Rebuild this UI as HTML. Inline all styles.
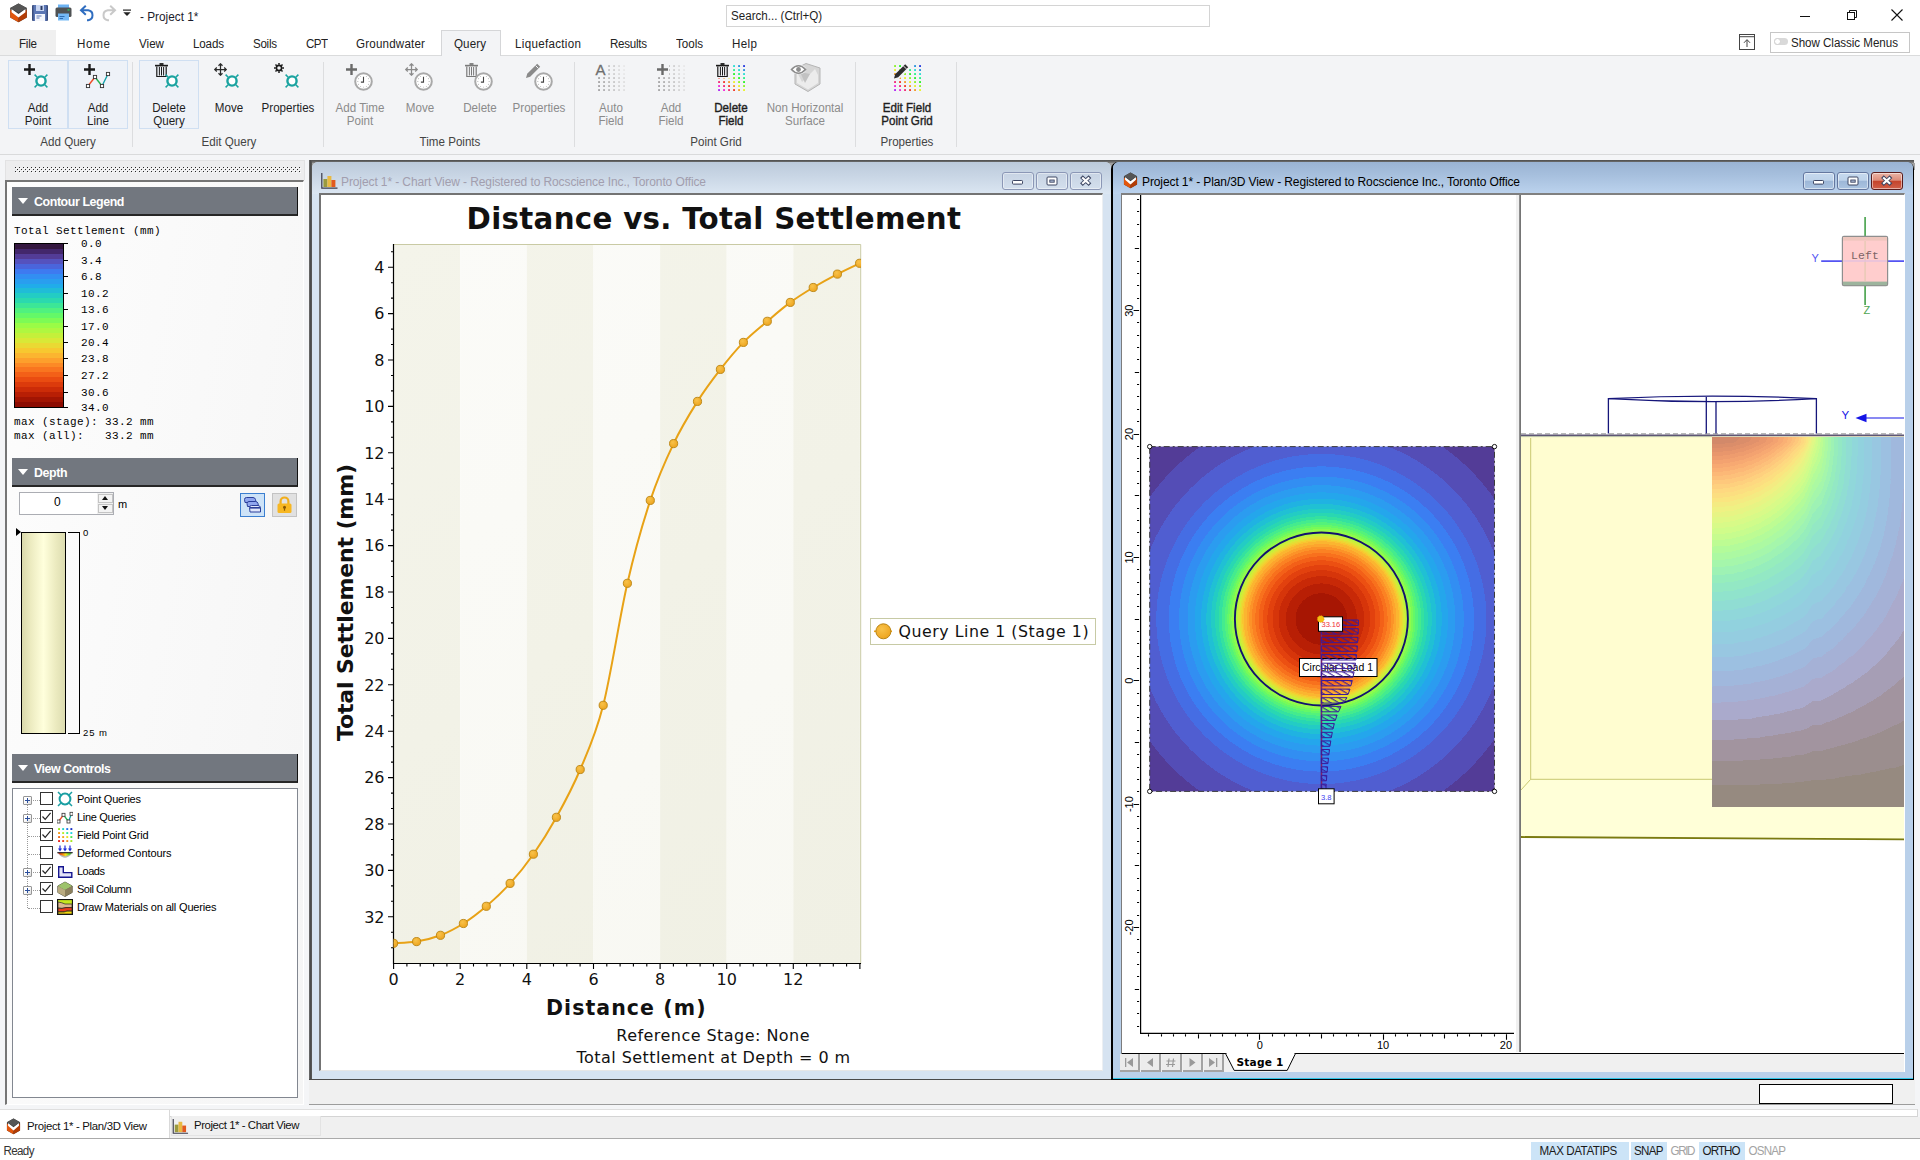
<!DOCTYPE html>
<html lang="en">
<head>
<meta charset="utf-8">
<title>Project 1* - Settle3</title>
<style>
*{box-sizing:border-box;margin:0;padding:0}
html,body{width:1920px;height:1160px;overflow:hidden;background:#f4f5f7}
body{font-family:"Liberation Sans",sans-serif;font-size:12px;color:#1e1e1e;position:relative}
.abs{position:absolute}
.t{position:absolute;white-space:nowrap;line-height:14px}
#titlebar{position:absolute;left:0;top:0;width:1920px;height:30px;background:#fff}
#tabrow{position:absolute;left:0;top:30px;width:1920px;height:26px;background:#fff;border-bottom:1px solid #dadbdc}
#filetab{position:absolute;left:0;top:0;width:56px;height:25px;background:#f0f0f0}
#ribbon{position:absolute;left:0;top:56px;width:1920px;height:99px;background:#f3f4f6;border-bottom:1px solid #d9dadb}
.tab{position:absolute;top:7px;font-size:11.6px;line-height:14px;white-space:nowrap;color:#222;transform:scaleY(1.09);transform-origin:50% 78%}
.sy{transform:scaleY(1.09);transform-origin:50% 78%}
#qtab{position:absolute;left:441px;top:0;width:60px;height:26px;background:#f3f4f6;border:1px solid #d5d6d8;border-bottom:none}
.rb{position:absolute;top:4px;height:69px;text-align:center;font-size:11.6px;line-height:13px;color:#1e1e1e}
.rb.hl{background:#eef2f8;box-shadow:inset 0 0 0 1px #cfdff2}
.rb.dis{color:#8b8b8b}
.rb .lbl{position:absolute;left:-20px;right:-20px;top:40.5px;white-space:pre-line;line-height:11.9px;transform:scaleY(1.09);transform-origin:50% 0}
.rb svg{position:absolute;left:50%;margin-left:-16px;top:2px}
.grp{position:absolute;top:79px;font-size:11.6px;line-height:14px;color:#444;white-space:nowrap;transform:scaleY(1.09);transform-origin:50% 78%}
.sep{position:absolute;top:6px;width:1px;height:85px;background:#dcdddf}
</style>
</head>
<body>
<div id="titlebar">
<svg class="abs" style="left:9px;top:3px" width="19" height="20" viewBox="0 0 19 20">
<polygon points="9.5,0.6 17.8,5 17.8,14.6 9.5,19.2 1.2,14.6 1.2,5" fill="#3e3e3e"/>
<polygon points="1.2,6.5 9.5,12.5 9.5,19.2 1.2,14.6" fill="#e2560d"/>
<polygon points="17.8,6.5 9.5,12.5 9.5,19.2 17.8,14.6" fill="#b23c05"/>
<polygon points="2.6,6 9.5,11 16.4,6 16.4,9.2 9.5,14.6 2.6,9.2" fill="#fff"/>
<polygon points="9.5,0.6 17.8,5 9.5,9.6 1.2,5" fill="#555"/>
</svg>
<svg class="abs" style="left:32px;top:5px" width="16" height="16" viewBox="0 0 16 16">
<rect x="0" y="0" width="16" height="16" rx="1" fill="#3b4d7c"/>
<rect x="1.5" y="0" width="13" height="16" fill="#5b76b4"/>
<rect x="4" y="0" width="8" height="6" fill="#c9d6f2"/>
<rect x="8.5" y="1" width="2" height="4" fill="#2b3a63"/>
<rect x="3" y="9" width="10" height="7" fill="#f4f6fc"/>
<rect x="4.5" y="10.5" width="5" height="1" fill="#5b76b4"/>
<rect x="4.5" y="12.5" width="3" height="1" fill="#5b76b4"/>
</svg>
<svg class="abs" style="left:55px;top:4px" width="17" height="17" viewBox="0 0 17 17">
<rect x="3" y="0.5" width="11" height="4" fill="#6cb2f2"/>
<rect x="0.5" y="3.5" width="16" height="9.5" rx="1.5" fill="#4f5254"/>
<rect x="12.5" y="5.2" width="2" height="1.4" fill="#2fc06a"/>
<rect x="3" y="9.5" width="11" height="7" fill="#74b9f6"/>
<rect x="4.5" y="12" width="5" height="1" fill="#2f6eb3"/>
<rect x="4.5" y="14" width="3.5" height="1" fill="#2f6eb3"/>
</svg>
<svg class="abs" style="left:79px;top:4px" width="17" height="18" viewBox="0 0 17 18">
<path d="M6.8,1.8 L2,6.3 L6.8,10.8 M2.4,6.3 H9.2 A5,5 0 0 1 9.2,16.2 H8" fill="none" stroke="#2f6dc0" stroke-width="2"/>
</svg>
<svg class="abs" style="left:100px;top:4px" width="17" height="18" viewBox="0 0 17 18">
<path d="M10.2,1.8 L15,6.3 L10.2,10.8 M14.6,6.3 H7.8 A5,5 0 0 0 7.8,16.2 H9" fill="none" stroke="#c9c9c9" stroke-width="2"/>
</svg>
<svg class="abs" style="left:122px;top:9px" width="10" height="8" viewBox="0 0 10 8">
<rect x="1" y="0.5" width="8" height="1.2" fill="#222"/><polygon points="1.3,3.2 8.7,3.2 5,7" fill="#222"/></svg>
<div class="t sy" id="ttl" style="left:140px;top:10px;font-size:11.8px;color:#1b1b2b">- Project 1*</div>
<div class="abs" style="left:726px;top:5px;width:484px;height:22px;border:1px solid #d4d4d4;background:#fff"></div>
<div class="t sy" id="srch" style="left:731px;top:9px;font-size:11.6px;color:#1e1e1e">Search... (Ctrl+Q)</div>
<svg class="abs" style="left:1795px;top:5px" width="115" height="22" viewBox="0 0 115 22">
<rect x="5" y="11" width="10" height="1" fill="#111"/>
<rect x="52.5" y="7.5" width="7" height="7" fill="none" stroke="#111" stroke-width="1"/>
<path d="M54.5,7.5 V5.5 H61.5 V12.5 H59.5" fill="none" stroke="#111" stroke-width="1"/>
<path d="M96.5,4.5 L107.5,15.5 M107.5,4.5 L96.5,15.5" fill="none" stroke="#111" stroke-width="1.1"/>
</svg>
</div>
<div id="tabrow"><div id="filetab"></div><div id="qtab"></div>
<div class="tab" style="left:19px;letter-spacing:-0.231px">File</div>
<div class="tab" style="left:77px;letter-spacing:0.686px">Home</div>
<div class="tab" style="left:139px;letter-spacing:0.022px">View</div>
<div class="tab" style="left:193px;letter-spacing:-0.151px">Loads</div>
<div class="tab" style="left:253px;letter-spacing:-0.286px">Soils</div>
<div class="tab" style="left:306px;letter-spacing:-0.6px">CPT</div>
<div class="tab" style="left:356px;letter-spacing:0.194px">Groundwater</div>
<div class="tab" style="left:454px;letter-spacing:0.103px">Query</div>
<div class="tab" style="left:515px;letter-spacing:0.313px">Liquefaction</div>
<div class="tab" style="left:610px;letter-spacing:-0.28px">Results</div>
<div class="tab" style="left:676px;letter-spacing:-0.02px">Tools</div>
<div class="tab" style="left:732px;letter-spacing:0.381px">Help</div>
<svg class="abs" style="left:1739px;top:3px" width="17" height="18" viewBox="0 0 17 18">
<rect x="0.5" y="1.5" width="15" height="15" fill="#fff" stroke="#444" stroke-width="1"/>
<rect x="0.5" y="1.5" width="15" height="2.2" fill="none" stroke="#444" stroke-width="1"/>
<path d="M8,14 V7 M5,9.8 L8,6.6 L11,9.8" fill="none" stroke="#444" stroke-width="1"/>
</svg>
<div class="abs" style="left:1770px;top:2px;width:140px;height:21px;border:1px solid #c6c6c6;background:#fff"></div>
<div class="abs" style="left:1774px;top:8px;width:14px;height:7px;border-radius:4px;background:#d9d9d9"></div><div class="abs" style="left:1774px;top:8px;width:7px;height:7px;border-radius:4px;background:#fff;border:1px solid #d0d0d0"></div>
<div class="t sy" style="left:1791px;top:6px;font-size:11.6px;color:#222;letter-spacing:-0.039px">Show Classic Menus</div>
</div>
<div id="ribbon">
<div class="rb hl" style="left:8.0px;width:60px"><svg width="40" height="34" viewBox="0 0 40 34" style="margin-left:-20px;top:0"><path d="M11.5,4 V15 M6,9.5 H17" stroke="#1a1a1a" stroke-width="2.4" fill="none"/><g transform="translate(16,14)" stroke="#1aa3a0" fill="none"><path d="M0.6,0.6 L3.2,3.2 M13.4,0.6 L10.8,3.2 M0.6,13.4 L3.2,10.8 M13.4,13.4 L10.8,10.8" stroke-width="1.5"/><circle cx="7" cy="7" r="4.6" stroke-width="2.4" fill="#fff"/></g></svg><div class="lbl">Add
Point</div></div>
<div class="rb hl" style="left:68.0px;width:60px"><svg width="40" height="34" viewBox="0 0 40 34" style="margin-left:-20px;top:0"><path d="M11.5,4 V15 M6,9.5 H17" stroke="#1a1a1a" stroke-width="2.4" fill="none"/><g fill="none" stroke-width="1.4"><path d="M10,26 L17,17" stroke="#f04a23"/><path d="M17,17 L24,26" stroke="#23b14d"/><path d="M24,26 L30,14" stroke="#12a0a8"/></g><rect x="8.4" y="24.4" width="3.2" height="3.2" fill="#fff" stroke="#333" stroke-width="0.9"/><rect x="15.4" y="15.4" width="3.2" height="3.2" fill="#fff" stroke="#333" stroke-width="0.9"/><rect x="22.4" y="24.4" width="3.2" height="3.2" fill="#fff" stroke="#333" stroke-width="0.9"/><rect x="28.4" y="12.4" width="3.2" height="3.2" fill="#fff" stroke="#333" stroke-width="0.9"/></svg><div class="lbl">Add
Line</div></div>
<div class="sep" style="left:132px"></div>
<div class="rb hl" style="left:139.0px;width:60px"><svg width="40" height="34" viewBox="0 0 40 34" style="margin-left:-20px;top:0"><g transform="translate(6,3)" fill="none" stroke="#1a1a1a"><path d="M0,2.6 H13" stroke-width="1.6"/><path d="M4.5,1 H8.5" stroke-width="1.8"/><path d="M1.8,3.4 V13.5 H11.2 V3.4" stroke-width="1.2"/><path d="M4.4,4 V12.5 M6.5,4 V12.5 M8.6,4 V12.5" stroke-width="1"/></g><g transform="translate(16,14)" stroke="#1aa3a0" fill="none"><path d="M0.6,0.6 L3.2,3.2 M13.4,0.6 L10.8,3.2 M0.6,13.4 L3.2,10.8 M13.4,13.4 L10.8,10.8" stroke-width="1.5"/><circle cx="7" cy="7" r="4.6" stroke-width="2.4" fill="#fff"/></g></svg><div class="lbl">Delete
Query</div></div>
<div class="rb " style="left:199.0px;width:60px"><svg width="40" height="34" viewBox="0 0 40 34" style="margin-left:-20px;top:0"><g transform="translate(5,3)" fill="none" stroke="#2a2a2a" stroke-width="1.25"><path d="M6.5,0.8 V12.2 M0.8,6.5 H12.2"/><path d="M4.5,2.8 L6.5,0.8 L8.5,2.8 M4.5,10.2 L6.5,12.2 L8.5,10.2 M2.8,4.5 L0.8,6.5 L2.8,8.5 M10.2,4.5 L12.2,6.5 L10.2,8.5"/></g><g transform="translate(16,14)" stroke="#1aa3a0" fill="none"><path d="M0.6,0.6 L3.2,3.2 M13.4,0.6 L10.8,3.2 M0.6,13.4 L3.2,10.8 M13.4,13.4 L10.8,10.8" stroke-width="1.5"/><circle cx="7" cy="7" r="4.6" stroke-width="2.4" fill="#fff"/></g></svg><div class="lbl">Move</div></div>
<div class="rb " style="left:258.0px;width:60px"><svg width="40" height="34" viewBox="0 0 40 34" style="margin-left:-20px;top:0"><g transform="translate(11,8)" stroke="#1a1a1a" fill="none"><circle r="2.6" stroke-width="1.6"/><path d="M3.20,0.00 L5.00,0.00" stroke-width="1.5"/><path d="M2.26,2.26 L3.54,3.54" stroke-width="1.5"/><path d="M0.00,3.20 L0.00,5.00" stroke-width="1.5"/><path d="M-2.26,2.26 L-3.54,3.54" stroke-width="1.5"/><path d="M-3.20,0.00 L-5.00,0.00" stroke-width="1.5"/><path d="M-2.26,-2.26 L-3.54,-3.54" stroke-width="1.5"/><path d="M-0.00,-3.20 L-0.00,-5.00" stroke-width="1.5"/><path d="M2.26,-2.26 L3.54,-3.54" stroke-width="1.5"/></g><g transform="translate(17,14)" stroke="#1aa3a0" fill="none"><path d="M0.6,0.6 L3.2,3.2 M13.4,0.6 L10.8,3.2 M0.6,13.4 L3.2,10.8 M13.4,13.4 L10.8,10.8" stroke-width="1.5"/><circle cx="7" cy="7" r="4.6" stroke-width="2.4" fill="#fff"/></g></svg><div class="lbl">Properties</div></div>
<div class="sep" style="left:323px"></div>
<div class="rb dis" style="left:330.0px;width:60px"><svg width="40" height="34" viewBox="0 0 40 34" style="margin-left:-20px;top:0"><path d="M11.5,4 V15 M6,9.5 H17" stroke="#6a6a6a" stroke-width="2.4" fill="none"/><g transform="translate(23.5,21.5)"><circle r="8.3" fill="#fff" stroke="#a9a9a9" stroke-width="2"/><path d="M0,-4.8 V0.6 H-2.6" stroke="#444" stroke-width="1.1" fill="none"/><circle cx="2.80" cy="-4.85" r="0.45" fill="#777"/><circle cx="4.85" cy="-2.80" r="0.45" fill="#777"/><circle cx="5.60" cy="-0.00" r="0.45" fill="#777"/><circle cx="4.85" cy="2.80" r="0.45" fill="#777"/><circle cx="2.80" cy="4.85" r="0.45" fill="#777"/><circle cx="0.00" cy="5.60" r="0.45" fill="#777"/><circle cx="-2.80" cy="4.85" r="0.45" fill="#777"/><circle cx="-4.85" cy="2.80" r="0.45" fill="#777"/><circle cx="-5.60" cy="0.00" r="0.45" fill="#777"/><circle cx="-4.85" cy="-2.80" r="0.45" fill="#777"/><circle cx="-2.80" cy="-4.85" r="0.45" fill="#777"/></g></svg><div class="lbl">Add Time
Point</div></div>
<div class="rb dis" style="left:390.0px;width:60px"><svg width="40" height="34" viewBox="0 0 40 34" style="margin-left:-20px;top:0"><g transform="translate(5,3)" fill="none" stroke="#8a8a8a" stroke-width="1.25"><path d="M6.5,0.8 V12.2 M0.8,6.5 H12.2"/><path d="M4.5,2.8 L6.5,0.8 L8.5,2.8 M4.5,10.2 L6.5,12.2 L8.5,10.2 M2.8,4.5 L0.8,6.5 L2.8,8.5 M10.2,4.5 L12.2,6.5 L10.2,8.5"/></g><g transform="translate(23.5,21.5)"><circle r="8.3" fill="#fff" stroke="#a9a9a9" stroke-width="2"/><path d="M0,-4.8 V0.6 H-2.6" stroke="#444" stroke-width="1.1" fill="none"/><circle cx="2.80" cy="-4.85" r="0.45" fill="#777"/><circle cx="4.85" cy="-2.80" r="0.45" fill="#777"/><circle cx="5.60" cy="-0.00" r="0.45" fill="#777"/><circle cx="4.85" cy="2.80" r="0.45" fill="#777"/><circle cx="2.80" cy="4.85" r="0.45" fill="#777"/><circle cx="0.00" cy="5.60" r="0.45" fill="#777"/><circle cx="-2.80" cy="4.85" r="0.45" fill="#777"/><circle cx="-4.85" cy="2.80" r="0.45" fill="#777"/><circle cx="-5.60" cy="0.00" r="0.45" fill="#777"/><circle cx="-4.85" cy="-2.80" r="0.45" fill="#777"/><circle cx="-2.80" cy="-4.85" r="0.45" fill="#777"/></g></svg><div class="lbl">Move</div></div>
<div class="rb dis" style="left:450.0px;width:60px"><svg width="40" height="34" viewBox="0 0 40 34" style="margin-left:-20px;top:0"><g transform="translate(5,3)" fill="none" stroke="#7a7a7a"><path d="M0,2.6 H13" stroke-width="1.6"/><path d="M4.5,1 H8.5" stroke-width="1.8"/><path d="M1.8,3.4 V13.5 H11.2 V3.4" stroke-width="1.2"/><path d="M4.4,4 V12.5 M6.5,4 V12.5 M8.6,4 V12.5" stroke-width="1"/></g><g transform="translate(23.5,21.5)"><circle r="8.3" fill="#fff" stroke="#a9a9a9" stroke-width="2"/><path d="M0,-4.8 V0.6 H-2.6" stroke="#444" stroke-width="1.1" fill="none"/><circle cx="2.80" cy="-4.85" r="0.45" fill="#777"/><circle cx="4.85" cy="-2.80" r="0.45" fill="#777"/><circle cx="5.60" cy="-0.00" r="0.45" fill="#777"/><circle cx="4.85" cy="2.80" r="0.45" fill="#777"/><circle cx="2.80" cy="4.85" r="0.45" fill="#777"/><circle cx="0.00" cy="5.60" r="0.45" fill="#777"/><circle cx="-2.80" cy="4.85" r="0.45" fill="#777"/><circle cx="-4.85" cy="2.80" r="0.45" fill="#777"/><circle cx="-5.60" cy="0.00" r="0.45" fill="#777"/><circle cx="-4.85" cy="-2.80" r="0.45" fill="#777"/><circle cx="-2.80" cy="-4.85" r="0.45" fill="#777"/></g></svg><div class="lbl">Delete</div></div>
<div class="rb dis" style="left:509.0px;width:60px"><svg width="40" height="34" viewBox="0 0 40 34" style="margin-left:-20px;top:0"><g transform="translate(6,3)"><path d="M1,15 L2.2,10.8 L12.2,0.8 L15.2,3.8 L5.2,13.8 Z" fill="#8a8a8a"/><path d="M10.6,2.6 L13.4,5.4" stroke="#f3f4f6" stroke-width="1"/></g><g transform="translate(24.5,21.5)"><circle r="8.3" fill="#fff" stroke="#a9a9a9" stroke-width="2"/><path d="M0,-4.8 V0.6 H-2.6" stroke="#444" stroke-width="1.1" fill="none"/><circle cx="2.80" cy="-4.85" r="0.45" fill="#777"/><circle cx="4.85" cy="-2.80" r="0.45" fill="#777"/><circle cx="5.60" cy="-0.00" r="0.45" fill="#777"/><circle cx="4.85" cy="2.80" r="0.45" fill="#777"/><circle cx="2.80" cy="4.85" r="0.45" fill="#777"/><circle cx="0.00" cy="5.60" r="0.45" fill="#777"/><circle cx="-2.80" cy="4.85" r="0.45" fill="#777"/><circle cx="-4.85" cy="2.80" r="0.45" fill="#777"/><circle cx="-5.60" cy="0.00" r="0.45" fill="#777"/><circle cx="-4.85" cy="-2.80" r="0.45" fill="#777"/><circle cx="-2.80" cy="-4.85" r="0.45" fill="#777"/></g></svg><div class="lbl">Properties</div></div>
<div class="sep" style="left:574px"></div>
<div class="rb dis" style="left:581.0px;width:60px"><svg width="40" height="34" viewBox="0 0 40 34" style="margin-left:-20px;top:0"><rect x="7.2" y="5.2" width="1.7" height="1.7" fill="#a0a0a0"/><rect x="12.2" y="5.2" width="1.7" height="1.7" fill="#aeaeae"/><rect x="17.2" y="5.2" width="1.7" height="1.7" fill="#bcbcbc"/><rect x="22.2" y="5.2" width="1.7" height="1.7" fill="#cacaca"/><rect x="27.2" y="5.2" width="1.7" height="1.7" fill="#d8d8d8"/><rect x="32.2" y="5.2" width="1.7" height="1.7" fill="#e6e6e6"/><rect x="7.2" y="9.2" width="1.7" height="1.7" fill="#a0a0a0"/><rect x="12.2" y="9.2" width="1.7" height="1.7" fill="#aeaeae"/><rect x="17.2" y="9.2" width="1.7" height="1.7" fill="#bcbcbc"/><rect x="22.2" y="9.2" width="1.7" height="1.7" fill="#cacaca"/><rect x="27.2" y="9.2" width="1.7" height="1.7" fill="#d8d8d8"/><rect x="32.2" y="9.2" width="1.7" height="1.7" fill="#e6e6e6"/><rect x="7.2" y="13.2" width="1.7" height="1.7" fill="#a0a0a0"/><rect x="12.2" y="13.2" width="1.7" height="1.7" fill="#aeaeae"/><rect x="17.2" y="13.2" width="1.7" height="1.7" fill="#bcbcbc"/><rect x="22.2" y="13.2" width="1.7" height="1.7" fill="#cacaca"/><rect x="27.2" y="13.2" width="1.7" height="1.7" fill="#d8d8d8"/><rect x="32.2" y="13.2" width="1.7" height="1.7" fill="#e6e6e6"/><rect x="7.2" y="17.2" width="1.7" height="1.7" fill="#969696"/><rect x="12.2" y="17.2" width="1.7" height="1.7" fill="#a4a4a4"/><rect x="17.2" y="17.2" width="1.7" height="1.7" fill="#b2b2b2"/><rect x="22.2" y="17.2" width="1.7" height="1.7" fill="#c0c0c0"/><rect x="27.2" y="17.2" width="1.7" height="1.7" fill="#cecece"/><rect x="32.2" y="17.2" width="1.7" height="1.7" fill="#dcdcdc"/><rect x="7.2" y="21.2" width="1.7" height="1.7" fill="#969696"/><rect x="12.2" y="21.2" width="1.7" height="1.7" fill="#a4a4a4"/><rect x="17.2" y="21.2" width="1.7" height="1.7" fill="#b2b2b2"/><rect x="22.2" y="21.2" width="1.7" height="1.7" fill="#c0c0c0"/><rect x="27.2" y="21.2" width="1.7" height="1.7" fill="#cecece"/><rect x="32.2" y="21.2" width="1.7" height="1.7" fill="#dcdcdc"/><rect x="7.2" y="25.2" width="1.7" height="1.7" fill="#969696"/><rect x="12.2" y="25.2" width="1.7" height="1.7" fill="#a4a4a4"/><rect x="17.2" y="25.2" width="1.7" height="1.7" fill="#b2b2b2"/><rect x="22.2" y="25.2" width="1.7" height="1.7" fill="#c0c0c0"/><rect x="27.2" y="25.2" width="1.7" height="1.7" fill="#cecece"/><rect x="32.2" y="25.2" width="1.7" height="1.7" fill="#dcdcdc"/><rect x="7.2" y="29.2" width="1.7" height="1.7" fill="#969696"/><rect x="12.2" y="29.2" width="1.7" height="1.7" fill="#a4a4a4"/><rect x="17.2" y="29.2" width="1.7" height="1.7" fill="#b2b2b2"/><rect x="22.2" y="29.2" width="1.7" height="1.7" fill="#c0c0c0"/><rect x="27.2" y="29.2" width="1.7" height="1.7" fill="#cecece"/><rect x="32.2" y="29.2" width="1.7" height="1.7" fill="#dcdcdc"/><rect x="4" y="3" width="13" height="13" fill="#f3f4f6"/><text x="4.5" y="15" font-family="Liberation Sans,sans-serif" font-size="15" fill="#6e6e6e" stroke="#6e6e6e" stroke-width="0.3">A</text></svg><div class="lbl">Auto
Field</div></div>
<div class="rb dis" style="left:641.0px;width:60px"><svg width="40" height="34" viewBox="0 0 40 34" style="margin-left:-20px;top:0"><rect x="7.2" y="5.2" width="1.7" height="1.7" fill="#a0a0a0"/><rect x="12.2" y="5.2" width="1.7" height="1.7" fill="#aeaeae"/><rect x="17.2" y="5.2" width="1.7" height="1.7" fill="#bcbcbc"/><rect x="22.2" y="5.2" width="1.7" height="1.7" fill="#cacaca"/><rect x="27.2" y="5.2" width="1.7" height="1.7" fill="#d8d8d8"/><rect x="32.2" y="5.2" width="1.7" height="1.7" fill="#e6e6e6"/><rect x="7.2" y="9.2" width="1.7" height="1.7" fill="#a0a0a0"/><rect x="12.2" y="9.2" width="1.7" height="1.7" fill="#aeaeae"/><rect x="17.2" y="9.2" width="1.7" height="1.7" fill="#bcbcbc"/><rect x="22.2" y="9.2" width="1.7" height="1.7" fill="#cacaca"/><rect x="27.2" y="9.2" width="1.7" height="1.7" fill="#d8d8d8"/><rect x="32.2" y="9.2" width="1.7" height="1.7" fill="#e6e6e6"/><rect x="7.2" y="13.2" width="1.7" height="1.7" fill="#a0a0a0"/><rect x="12.2" y="13.2" width="1.7" height="1.7" fill="#aeaeae"/><rect x="17.2" y="13.2" width="1.7" height="1.7" fill="#bcbcbc"/><rect x="22.2" y="13.2" width="1.7" height="1.7" fill="#cacaca"/><rect x="27.2" y="13.2" width="1.7" height="1.7" fill="#d8d8d8"/><rect x="32.2" y="13.2" width="1.7" height="1.7" fill="#e6e6e6"/><rect x="7.2" y="17.2" width="1.7" height="1.7" fill="#969696"/><rect x="12.2" y="17.2" width="1.7" height="1.7" fill="#a4a4a4"/><rect x="17.2" y="17.2" width="1.7" height="1.7" fill="#b2b2b2"/><rect x="22.2" y="17.2" width="1.7" height="1.7" fill="#c0c0c0"/><rect x="27.2" y="17.2" width="1.7" height="1.7" fill="#cecece"/><rect x="32.2" y="17.2" width="1.7" height="1.7" fill="#dcdcdc"/><rect x="7.2" y="21.2" width="1.7" height="1.7" fill="#969696"/><rect x="12.2" y="21.2" width="1.7" height="1.7" fill="#a4a4a4"/><rect x="17.2" y="21.2" width="1.7" height="1.7" fill="#b2b2b2"/><rect x="22.2" y="21.2" width="1.7" height="1.7" fill="#c0c0c0"/><rect x="27.2" y="21.2" width="1.7" height="1.7" fill="#cecece"/><rect x="32.2" y="21.2" width="1.7" height="1.7" fill="#dcdcdc"/><rect x="7.2" y="25.2" width="1.7" height="1.7" fill="#969696"/><rect x="12.2" y="25.2" width="1.7" height="1.7" fill="#a4a4a4"/><rect x="17.2" y="25.2" width="1.7" height="1.7" fill="#b2b2b2"/><rect x="22.2" y="25.2" width="1.7" height="1.7" fill="#c0c0c0"/><rect x="27.2" y="25.2" width="1.7" height="1.7" fill="#cecece"/><rect x="32.2" y="25.2" width="1.7" height="1.7" fill="#dcdcdc"/><rect x="7.2" y="29.2" width="1.7" height="1.7" fill="#969696"/><rect x="12.2" y="29.2" width="1.7" height="1.7" fill="#a4a4a4"/><rect x="17.2" y="29.2" width="1.7" height="1.7" fill="#b2b2b2"/><rect x="22.2" y="29.2" width="1.7" height="1.7" fill="#c0c0c0"/><rect x="27.2" y="29.2" width="1.7" height="1.7" fill="#cecece"/><rect x="32.2" y="29.2" width="1.7" height="1.7" fill="#dcdcdc"/><rect x="5" y="3" width="13" height="13" fill="#f3f4f6"/><path d="M11.5,4 V15 M6,9.5 H17" stroke="#6a6a6a" stroke-width="2.4" fill="none"/></svg><div class="lbl">Add
Field</div></div>
<div class="rb " style="left:701.0px;width:60px"><svg width="40" height="34" viewBox="0 0 40 34" style="margin-left:-20px;top:0"><rect x="7.2" y="5.2" width="1.7" height="1.7" fill="#75f200"/><rect x="12.2" y="5.2" width="1.7" height="1.7" fill="#02f200"/><rect x="17.2" y="5.2" width="1.7" height="1.7" fill="#00f271"/><rect x="22.2" y="5.2" width="1.7" height="1.7" fill="#00d8cc"/><rect x="27.2" y="5.2" width="1.7" height="1.7" fill="#007ed8"/><rect x="32.2" y="5.2" width="1.7" height="1.7" fill="#0017d8"/><rect x="7.2" y="9.2" width="1.7" height="1.7" fill="#e8f200"/><rect x="12.2" y="9.2" width="1.7" height="1.7" fill="#75f200"/><rect x="17.2" y="9.2" width="1.7" height="1.7" fill="#02f200"/><rect x="22.2" y="9.2" width="1.7" height="1.7" fill="#00f271"/><rect x="27.2" y="9.2" width="1.7" height="1.7" fill="#00d8cc"/><rect x="32.2" y="9.2" width="1.7" height="1.7" fill="#007ed8"/><rect x="7.2" y="13.2" width="1.7" height="1.7" fill="#f28900"/><rect x="12.2" y="13.2" width="1.7" height="1.7" fill="#e8f200"/><rect x="17.2" y="13.2" width="1.7" height="1.7" fill="#75f200"/><rect x="22.2" y="13.2" width="1.7" height="1.7" fill="#02f200"/><rect x="27.2" y="13.2" width="1.7" height="1.7" fill="#00f271"/><rect x="32.2" y="13.2" width="1.7" height="1.7" fill="#00d8cc"/><rect x="7.2" y="17.2" width="1.7" height="1.7" fill="#f21600"/><rect x="12.2" y="17.2" width="1.7" height="1.7" fill="#f28900"/><rect x="17.2" y="17.2" width="1.7" height="1.7" fill="#e8f200"/><rect x="22.2" y="17.2" width="1.7" height="1.7" fill="#75f200"/><rect x="27.2" y="17.2" width="1.7" height="1.7" fill="#02f200"/><rect x="32.2" y="17.2" width="1.7" height="1.7" fill="#00f271"/><rect x="7.2" y="21.2" width="1.7" height="1.7" fill="#f2005c"/><rect x="12.2" y="21.2" width="1.7" height="1.7" fill="#f21600"/><rect x="17.2" y="21.2" width="1.7" height="1.7" fill="#f28900"/><rect x="22.2" y="21.2" width="1.7" height="1.7" fill="#e8f200"/><rect x="27.2" y="21.2" width="1.7" height="1.7" fill="#75f200"/><rect x="32.2" y="21.2" width="1.7" height="1.7" fill="#02f200"/><rect x="7.2" y="25.2" width="1.7" height="1.7" fill="#f200cf"/><rect x="12.2" y="25.2" width="1.7" height="1.7" fill="#f2005c"/><rect x="17.2" y="25.2" width="1.7" height="1.7" fill="#f21600"/><rect x="22.2" y="25.2" width="1.7" height="1.7" fill="#f28900"/><rect x="27.2" y="25.2" width="1.7" height="1.7" fill="#e8f200"/><rect x="32.2" y="25.2" width="1.7" height="1.7" fill="#75f200"/><rect x="7.2" y="29.2" width="1.7" height="1.7" fill="#a100f2"/><rect x="12.2" y="29.2" width="1.7" height="1.7" fill="#f200cf"/><rect x="17.2" y="29.2" width="1.7" height="1.7" fill="#f2005c"/><rect x="22.2" y="29.2" width="1.7" height="1.7" fill="#f21600"/><rect x="27.2" y="29.2" width="1.7" height="1.7" fill="#f28900"/><rect x="32.2" y="29.2" width="1.7" height="1.7" fill="#e8f200"/><rect x="4" y="3" width="15" height="15.5" fill="#f3f4f6"/><g transform="translate(5,3)" fill="none" stroke="#1a1a1a"><path d="M0,2.6 H13" stroke-width="1.6"/><path d="M4.5,1 H8.5" stroke-width="1.8"/><path d="M1.8,3.4 V13.5 H11.2 V3.4" stroke-width="1.2"/><path d="M4.4,4 V12.5 M6.5,4 V12.5 M8.6,4 V12.5" stroke-width="1"/></g></svg><div class="lbl" style="-webkit-text-stroke:0.35px #1e1e1e">Delete
Field</div></div>
<div class="rb dis" style="left:775.0px;width:60px"><svg width="40" height="34" viewBox="0 0 40 34" style="margin-left:-20px;top:0"><g transform="translate(6,3)"><polygon points="4,6 15,0.5 29,5 29,21 17,28.5 4,21" fill="#d6d6d6" stroke="#b5b5b5" stroke-width="1"/><path d="M6,9 L11,19 L17,13 L24,6 L27,12 L27,20 L17,26.5 L6,20 Z" fill="#ececec"/><path d="M9,9 L14,20 L19,11 Z" fill="#c2c2c2"/><ellipse cx="7.5" cy="6.5" rx="7.5" ry="4.8" fill="#f3f4f6"/><path d="M0.5,6.5 Q7.5,-1 14.5,6.5 Q7.5,14 0.5,6.5 Z" fill="#fff" stroke="#8c8c8c" stroke-width="1.6"/><circle cx="7.5" cy="6.5" r="2.4" fill="#8c8c8c"/></g></svg><div class="lbl">Non Horizontal
Surface</div></div>
<div class="sep" style="left:855px"></div>
<div class="rb " style="left:877.0px;width:60px"><svg width="40" height="34" viewBox="0 0 40 34" style="margin-left:-20px;top:0"><rect x="7.2" y="5.2" width="1.7" height="1.7" fill="#75f200"/><rect x="12.2" y="5.2" width="1.7" height="1.7" fill="#02f200"/><rect x="17.2" y="5.2" width="1.7" height="1.7" fill="#00f271"/><rect x="22.2" y="5.2" width="1.7" height="1.7" fill="#00d8cc"/><rect x="27.2" y="5.2" width="1.7" height="1.7" fill="#007ed8"/><rect x="32.2" y="5.2" width="1.7" height="1.7" fill="#0017d8"/><rect x="7.2" y="9.2" width="1.7" height="1.7" fill="#e8f200"/><rect x="12.2" y="9.2" width="1.7" height="1.7" fill="#75f200"/><rect x="17.2" y="9.2" width="1.7" height="1.7" fill="#02f200"/><rect x="22.2" y="9.2" width="1.7" height="1.7" fill="#00f271"/><rect x="27.2" y="9.2" width="1.7" height="1.7" fill="#00d8cc"/><rect x="32.2" y="9.2" width="1.7" height="1.7" fill="#007ed8"/><rect x="7.2" y="13.2" width="1.7" height="1.7" fill="#f28900"/><rect x="12.2" y="13.2" width="1.7" height="1.7" fill="#e8f200"/><rect x="17.2" y="13.2" width="1.7" height="1.7" fill="#75f200"/><rect x="22.2" y="13.2" width="1.7" height="1.7" fill="#02f200"/><rect x="27.2" y="13.2" width="1.7" height="1.7" fill="#00f271"/><rect x="32.2" y="13.2" width="1.7" height="1.7" fill="#00d8cc"/><rect x="7.2" y="17.2" width="1.7" height="1.7" fill="#f21600"/><rect x="12.2" y="17.2" width="1.7" height="1.7" fill="#f28900"/><rect x="17.2" y="17.2" width="1.7" height="1.7" fill="#e8f200"/><rect x="22.2" y="17.2" width="1.7" height="1.7" fill="#75f200"/><rect x="27.2" y="17.2" width="1.7" height="1.7" fill="#02f200"/><rect x="32.2" y="17.2" width="1.7" height="1.7" fill="#00f271"/><rect x="7.2" y="21.2" width="1.7" height="1.7" fill="#f2005c"/><rect x="12.2" y="21.2" width="1.7" height="1.7" fill="#f21600"/><rect x="17.2" y="21.2" width="1.7" height="1.7" fill="#f28900"/><rect x="22.2" y="21.2" width="1.7" height="1.7" fill="#e8f200"/><rect x="27.2" y="21.2" width="1.7" height="1.7" fill="#75f200"/><rect x="32.2" y="21.2" width="1.7" height="1.7" fill="#02f200"/><rect x="7.2" y="25.2" width="1.7" height="1.7" fill="#f200cf"/><rect x="12.2" y="25.2" width="1.7" height="1.7" fill="#f2005c"/><rect x="17.2" y="25.2" width="1.7" height="1.7" fill="#f21600"/><rect x="22.2" y="25.2" width="1.7" height="1.7" fill="#f28900"/><rect x="27.2" y="25.2" width="1.7" height="1.7" fill="#e8f200"/><rect x="32.2" y="25.2" width="1.7" height="1.7" fill="#75f200"/><rect x="7.2" y="29.2" width="1.7" height="1.7" fill="#a100f2"/><rect x="12.2" y="29.2" width="1.7" height="1.7" fill="#f200cf"/><rect x="17.2" y="29.2" width="1.7" height="1.7" fill="#f2005c"/><rect x="22.2" y="29.2" width="1.7" height="1.7" fill="#f21600"/><rect x="27.2" y="29.2" width="1.7" height="1.7" fill="#f28900"/><rect x="32.2" y="29.2" width="1.7" height="1.7" fill="#e8f200"/><polygon points="5,20 20,2 25,6 10,21" fill="#f3f4f6"/><g transform="translate(6,3.5)"><path d="M1,15 L2.2,10.8 L12.2,0.8 L15.2,3.8 L5.2,13.8 Z" fill="#2c2c2c"/><path d="M10.6,2.6 L13.4,5.4" stroke="#f3f4f6" stroke-width="1"/></g></svg><div class="lbl" style="-webkit-text-stroke:0.35px #1e1e1e">Edit Field
Point Grid</div></div>
<div class="sep" style="left:956px"></div>
<div class="grp" style="left:18px;width:100px;text-align:center">Add Query</div>
<div class="grp" style="left:179px;width:100px;text-align:center">Edit Query</div>
<div class="grp" style="left:400px;width:100px;text-align:center">Time Points</div>
<div class="grp" style="left:666px;width:100px;text-align:center">Point Grid</div>
<div class="grp" style="left:857px;width:100px;text-align:center">Properties</div>
</div>
<style>
#lp{position:absolute;left:5px;top:180px;width:299px;height:925px;background:linear-gradient(100deg,#fdfdfd,#f5f5f5);border-left:2px solid #757575;border-top:2px solid #757575;border-right:1px solid #fff;border-bottom:1px solid #fff}
#grip{position:absolute;left:5px;top:160px;width:300px;height:20px;background:#ededee;border:1px solid #e2e2e3;border-bottom:none}
.ph{position:absolute;left:12px;width:286px;height:29px;background:#72777f;border-bottom:2px solid #262626;border-right:1px solid #111;color:#fff;font-weight:bold;font-size:12.4px}
.ph span{position:absolute;left:22px;top:8px;line-height:14px;white-space:nowrap}
.ph i{position:absolute;left:6px;top:11px;width:0;height:0;border-left:5px solid transparent;border-right:5px solid transparent;border-top:6px solid #fff}
.mono{position:absolute;font-family:"Liberation Mono",monospace;font-size:11px;letter-spacing:0.4px;line-height:12px;color:#000;white-space:pre;}
.tr{position:absolute;left:77px;font-size:11px;line-height:14px;color:#000;white-space:nowrap}
.cb{position:absolute;left:40px;width:13px;height:13px;border:1px solid #333;background:#fff}
.ex{position:absolute;left:23px;width:9px;height:9px;border:1px solid #969696;background:linear-gradient(135deg,#fff 40%,#dcdcdc);border-radius:1px}
.ex:before{content:"";position:absolute;left:1px;top:3px;width:5px;height:1px;background:#2c4f9c}
.ex:after{content:"";position:absolute;left:3px;top:1px;width:1px;height:5px;background:#2c4f9c}
</style>
<div id="grip"></div><svg class="abs" style="left:15px;top:167px" width="286" height="6" viewBox="0 0 286 6"><defs><pattern id="gp" width="4" height="4" patternUnits="userSpaceOnUse"><rect x="0" y="0" width="1" height="1" fill="#2a2a2a"/><rect x="2" y="2" width="1" height="1" fill="#2a2a2a"/><rect x="1" y="1" width="1" height="1" fill="#fff"/><rect x="3" y="3" width="1" height="1" fill="#fff"/></pattern></defs><rect width="286" height="6" fill="url(#gp)"/></svg>
<div id="lp"></div>
<div class="ph" style="top:187px"><i></i><span style="letter-spacing:-0.403px">Contour Legend</span></div>
<div class="mono" style="left:14px;top:225px">Total Settlement (mm)</div>
<div class="abs" style="left:14px;top:243px;width:50px;height:165px;border:1px solid #000;background:linear-gradient(180deg,#34173f 0.00%,#34173f 3.03%,#43276c 3.03%,#43276c 6.06%,#533c97 6.06%,#533c97 9.09%,#5552be 9.09%,#5552be 12.12%,#4a65dc 12.12%,#4a65dc 15.15%,#3e7af0 15.15%,#3e7af0 18.18%,#328ef2 18.18%,#328ef2 21.21%,#299eef 21.21%,#299eef 24.24%,#20acea 24.24%,#20acea 27.27%,#20bcd7 27.27%,#20bcd7 30.30%,#23ccc4 30.30%,#23ccc4 33.33%,#2bd9ae 33.33%,#2bd9ae 36.36%,#3ce697 36.36%,#3ce697 39.39%,#50f17f 39.39%,#50f17f 42.42%,#64f868 42.42%,#64f868 45.45%,#7dfb55 45.45%,#7dfb55 48.48%,#9afc46 48.48%,#9afc46 51.52%,#aff740 51.52%,#aff740 54.55%,#c4f03a 54.55%,#c4f03a 57.58%,#d9e837 57.58%,#d9e837 60.61%,#ead933 60.61%,#ead933 63.64%,#f7c830 63.64%,#f7c830 66.67%,#fbb530 66.67%,#fbb530 69.70%,#fda02c 69.70%,#fda02c 72.73%,#fc8a26 72.73%,#fc8a26 75.76%,#f9751f 75.76%,#f9751f 78.79%,#f36018 78.79%,#f36018 81.82%,#ea4c11 81.82%,#ea4c11 84.85%,#dc3b0c 84.85%,#dc3b0c 87.88%,#cc2c08 87.88%,#cc2c08 90.91%,#b81f05 90.91%,#b81f05 93.94%,#a21503 93.94%,#a21503 96.97%,#8c0c02 96.97%,#8c0c02 100.00%)"></div>
<div class="abs" style="left:63px;top:243px;width:5px;height:1px;background:#000"></div>
<div class="mono" style="left:81px;top:237.7px">0.0</div>
<div class="abs" style="left:63px;top:260px;width:5px;height:1px;background:#000"></div>
<div class="mono" style="left:81px;top:254.7px">3.4</div>
<div class="abs" style="left:63px;top:276px;width:5px;height:1px;background:#000"></div>
<div class="mono" style="left:81px;top:270.7px">6.8</div>
<div class="abs" style="left:63px;top:293px;width:5px;height:1px;background:#000"></div>
<div class="mono" style="left:81px;top:287.7px">10.2</div>
<div class="abs" style="left:63px;top:309px;width:5px;height:1px;background:#000"></div>
<div class="mono" style="left:81px;top:303.7px">13.6</div>
<div class="abs" style="left:63px;top:326px;width:5px;height:1px;background:#000"></div>
<div class="mono" style="left:81px;top:320.7px">17.0</div>
<div class="abs" style="left:63px;top:342px;width:5px;height:1px;background:#000"></div>
<div class="mono" style="left:81px;top:336.7px">20.4</div>
<div class="abs" style="left:63px;top:358px;width:5px;height:1px;background:#000"></div>
<div class="mono" style="left:81px;top:352.7px">23.8</div>
<div class="abs" style="left:63px;top:375px;width:5px;height:1px;background:#000"></div>
<div class="mono" style="left:81px;top:369.7px">27.2</div>
<div class="abs" style="left:63px;top:392px;width:5px;height:1px;background:#000"></div>
<div class="mono" style="left:81px;top:386.7px">30.6</div>
<div class="abs" style="left:63px;top:407px;width:5px;height:1px;background:#000"></div>
<div class="mono" style="left:81px;top:401.7px">34.0</div>
<div class="mono" style="left:14px;top:416px">max (stage): 33.2 mm</div>
<div class="mono" style="left:14px;top:430px">max (all):   33.2 mm</div>
<div class="ph" style="top:458px"><i></i><span style="letter-spacing:-0.407px">Depth</span></div>
<div class="abs" style="left:19px;top:492px;width:95px;height:23px;border:1px solid #abadb3;background:#f0f0f0"><div class="abs" style="left:0;top:0;width:77px;height:21px;background:#fff"></div><div class="abs" style="left:78px;top:1px;width:15px;height:9px;border:1px solid #c4c4c4;background:#f3f3f3"></div><div class="abs" style="left:78px;top:11px;width:15px;height:9px;border:1px solid #c4c4c4;background:#f3f3f3"></div><div class="abs" style="left:82px;top:3px;border-left:3.5px solid transparent;border-right:3.5px solid transparent;border-bottom:4px solid #111"></div><div class="abs" style="left:82px;top:13px;border-left:3.5px solid transparent;border-right:3.5px solid transparent;border-top:4px solid #111"></div></div>
<div class="t" style="left:54px;top:495px;font-size:12px;color:#000">0</div>
<div class="t" style="left:118px;top:497px;font-size:11px;color:#000">m</div>
<div class="abs" style="left:240px;top:493px;width:25px;height:24px;background:#cde3f8;border:1px solid #3b7fd0"></div>
<svg class="abs" style="left:243px;top:496px" width="19" height="18" viewBox="0 0 19 18">
<g stroke="#2a3f9a" stroke-width="1" fill="#8fa6ee">
<path d="M1.5,3.5 Q1.5,1.5 3.5,1.5 H10 Q12,1.5 12.5,3.5 L13,6.5 H2 Z"/>
<path d="M4,7.5 Q4,5.5 6,5.5 H12.5 Q14.5,5.5 15,7.5 L15.5,10.5 H4.5 Z"/>
<path d="M6.5,11.5 Q6.5,9.5 8.5,9.5 H15 Q17,9.5 17.5,11.5 V16 H7 Z" fill="#dfe6fb"/>
<path d="M7,11.8 H17.2" stroke-width="1.6"/></g></svg>
<div class="abs" style="left:272px;top:493px;width:25px;height:24px;background:#e1e1e1;border:1px solid #c3c3c3"></div>
<svg class="abs" style="left:276px;top:496px" width="17" height="18" viewBox="0 0 17 18">
<path d="M4.6,8 V5.4 A3.9,3.9 0 0 1 12.4,5.4 V8" fill="none" stroke="#f2ae1c" stroke-width="2.2"/>
<rect x="1.5" y="7.5" width="14" height="9.5" rx="1.5" fill="#f7b722"/>
<circle cx="8.5" cy="11.3" r="1.5" fill="#8a5a05"/><rect x="7.9" y="11.5" width="1.2" height="3.2" fill="#8a5a05"/></svg>
<div class="abs" style="left:21px;top:532px;width:45px;height:202px;border:1px solid #000;background:linear-gradient(90deg,#d9d9ac 0%,#ecebc0 20%,#ffffdc 50%,#ecebc0 78%,#dcdcb0 100%)"></div>
<div class="abs" style="left:68px;top:532px;width:12px;height:202px;border:1px solid #000;border-left:none"></div>
<div class="abs" style="left:16px;top:528px;border-top:4px solid transparent;border-bottom:4px solid transparent;border-left:5px solid #000"></div>
<div class="t" style="left:83px;top:525.5px;font-size:9.5px;color:#000">0</div>
<div class="t" style="left:83px;top:726px;font-size:9.5px;color:#000;letter-spacing:0.9px">25 m</div>
<div class="ph" style="top:754px"><i></i><span style="letter-spacing:-0.454px">View Controls</span></div>
<div class="abs" style="left:12px;top:788px;width:286px;height:310px;background:#fff;border:1px solid #828790"></div>
<div class="abs" style="left:27px;top:805px;width:1px;height:103px;border-left:1px dotted #9a9a9a"></div>
<div class="abs" style="left:28px;top:800px;width:12px;height:1px;border-top:1px dotted #9a9a9a"></div>
<div class="ex" style="top:796px"></div>
<div class="cb" style="top:792px"></div>
<svg class="abs" style="left:57px;top:791px" width="16" height="16" viewBox="0 0 16 16"><g stroke="#1a9fa3" fill="none"><path d="M1,1 L4,4 M15,1 L12,4 M1,15 L4,12 M15,15 L12,12" stroke-width="1.5"/><circle cx="8" cy="8" r="5.4" stroke-width="2" fill="#fff"/></g></svg>
<div class="tr" style="top:792px;letter-spacing:-0.22px">Point Queries</div>
<div class="abs" style="left:28px;top:818px;width:12px;height:1px;border-top:1px dotted #9a9a9a"></div>
<div class="ex" style="top:814px"></div>
<div class="cb" style="top:810px"><svg width="11" height="11" viewBox="0 0 11 11" style="position:absolute;left:0;top:0"><path d="M1.5,5.5 L4.2,8.4 L9.6,1.8" fill="none" stroke="#222" stroke-width="1.2"/></svg></div>
<svg class="abs" style="left:57px;top:809px" width="16" height="16" viewBox="0 0 16 16"><g fill="none" stroke-width="1.3"><path d="M1.5,12.5 L6.5,5.8" stroke="#f04a23"/><path d="M6.5,5.8 L11.5,12.5" stroke="#23b14d"/><path d="M11.5,12.5 L14.5,4.8" stroke="#12a0a8"/></g><rect x="0.0" y="11.0" width="3" height="3" fill="#fff" stroke="#333" stroke-width="0.8"/><rect x="5.0" y="4.3" width="3" height="3" fill="#fff" stroke="#333" stroke-width="0.8"/><rect x="10.0" y="11.0" width="3" height="3" fill="#fff" stroke="#333" stroke-width="0.8"/><rect x="13.0" y="3.3" width="3" height="3" fill="#fff" stroke="#333" stroke-width="0.8"/></svg>
<div class="tr" style="top:810px;letter-spacing:-0.306px">Line Queries</div>
<div class="abs" style="left:28px;top:836px;width:12px;height:1px;border-top:1px dotted #9a9a9a"></div>
<div class="cb" style="top:828px"><svg width="11" height="11" viewBox="0 0 11 11" style="position:absolute;left:0;top:0"><path d="M1.5,5.5 L4.2,8.4 L9.6,1.8" fill="none" stroke="#222" stroke-width="1.2"/></svg></div>
<svg class="abs" style="left:57px;top:827px" width="16" height="16" viewBox="0 0 16 16"><rect x="1.1" y="1.1" width="1.9" height="1.9" fill="#9be81c"/><rect x="5.2" y="1.1" width="1.9" height="1.9" fill="#1fd6c8"/><rect x="9.3" y="1.1" width="1.9" height="1.9" fill="#1f74f0"/><rect x="13.4" y="1.1" width="1.9" height="1.9" fill="#1a2fc4"/><rect x="1.1" y="5.1" width="1.9" height="1.9" fill="#f59a1a"/><rect x="5.2" y="5.1" width="1.9" height="1.9" fill="#b8ee1f"/><rect x="9.3" y="5.1" width="1.9" height="1.9" fill="#2fe69a"/><rect x="13.4" y="5.1" width="1.9" height="1.9" fill="#1fd2e6"/><rect x="1.1" y="9.1" width="1.9" height="1.9" fill="#f06a1a"/><rect x="5.2" y="9.1" width="1.9" height="1.9" fill="#f5a81a"/><rect x="9.3" y="9.1" width="1.9" height="1.9" fill="#e8e01f"/><rect x="13.4" y="9.1" width="1.9" height="1.9" fill="#4be64b"/><rect x="1.1" y="13.1" width="1.9" height="1.9" fill="#e8261f"/><rect x="5.2" y="13.1" width="1.9" height="1.9" fill="#ec3a1f"/><rect x="9.3" y="13.1" width="1.9" height="1.9" fill="#f08a1a"/><rect x="13.4" y="13.1" width="1.9" height="1.9" fill="#a6e61f"/></svg>
<div class="tr" style="top:828px;letter-spacing:-0.287px">Field Point Grid</div>
<div class="abs" style="left:28px;top:854px;width:12px;height:1px;border-top:1px dotted #9a9a9a"></div>
<div class="cb" style="top:846px"></div>
<svg class="abs" style="left:57px;top:845px" width="16" height="16" viewBox="0 0 16 16"><g stroke="#1f2bd8" stroke-width="1.2" fill="#1f2bd8"><path d="M3,0.5 V5"/><polygon points="1,3.5 5,3.5 3,6.5" stroke="none"/><path d="M8,0.5 V5"/><polygon points="6,3.5 10,3.5 8,6.5" stroke="none"/><path d="M13,0.5 V5"/><polygon points="11,3.5 15,3.5 13,6.5" stroke="none"/></g><defs><linearGradient id="dcg" x1="0" y1="0" x2="1" y2="0"><stop offset="0.05" stop-color="#e8220f"/><stop offset="0.35" stop-color="#f58a14"/><stop offset="0.55" stop-color="#f3e41c"/><stop offset="0.8" stop-color="#59d32a"/><stop offset="1" stop-color="#2fb44a"/></linearGradient></defs><path d="M1.5,9 Q8,16.5 14.5,9 Z" fill="#b9b9b9"/><path d="M0.8,8 Q8,14.5 15.2,8 Z" fill="url(#dcg)"/><path d="M0.3,7.7 H15.7" stroke="#111" stroke-width="1.1"/></svg>
<div class="tr" style="top:846px;letter-spacing:-0.093px">Deformed Contours</div>
<div class="abs" style="left:28px;top:872px;width:12px;height:1px;border-top:1px dotted #9a9a9a"></div>
<div class="ex" style="top:868px"></div>
<div class="cb" style="top:864px"><svg width="11" height="11" viewBox="0 0 11 11" style="position:absolute;left:0;top:0"><path d="M1.5,5.5 L4.2,8.4 L9.6,1.8" fill="none" stroke="#222" stroke-width="1.2"/></svg></div>
<svg class="abs" style="left:57px;top:863px" width="16" height="16" viewBox="0 0 16 16"><path d="M1.7,3.8 H6.3 V9.6 H14.8 V14.2 H1.7 Z" fill="#e3e3f8" stroke="#15158f" stroke-width="1.4"/></svg>
<div class="tr" style="top:864px;letter-spacing:-0.493px">Loads</div>
<div class="abs" style="left:28px;top:890px;width:12px;height:1px;border-top:1px dotted #9a9a9a"></div>
<div class="ex" style="top:886px"></div>
<div class="cb" style="top:882px"><svg width="11" height="11" viewBox="0 0 11 11" style="position:absolute;left:0;top:0"><path d="M1.5,5.5 L4.2,8.4 L9.6,1.8" fill="none" stroke="#222" stroke-width="1.2"/></svg></div>
<svg class="abs" style="left:57px;top:881px" width="16" height="16" viewBox="0 0 16 16"><polygon points="0.8,5 8,1 15.2,5 15.2,11.5 8,15.5 0.8,11.5" fill="#6b6b55" stroke="#4a4a3a" stroke-width="0.8"/><polygon points="0.8,5 8,1 15.2,5 8,9" fill="#9dc36b"/><polygon points="0.8,5 8,9 8,15.5 0.8,11.5" fill="#b9ab80"/><polygon points="15.2,5 8,9 8,15.5 15.2,11.5" fill="#8b7f5c"/></svg>
<div class="tr" style="top:882px;letter-spacing:-0.48px">Soil Column</div>
<div class="abs" style="left:28px;top:908px;width:12px;height:1px;border-top:1px dotted #9a9a9a"></div>
<div class="cb" style="top:900px"></div>
<svg class="abs" style="left:57px;top:899px" width="16" height="16" viewBox="0 0 16 16"><rect x="0.5" y="0.5" width="15" height="15" fill="#c6e81e" stroke="#111" stroke-width="1.2"/><path d="M1,3 Q5,3.5 8,5 L15,5 V8.5 H9 Q5,10 1,9 Z" fill="#dcb78e" stroke="#222" stroke-width="0.7"/><path d="M1,9.2 Q5,10 9,8.6 H15 V12 Q9,11.5 7,12.8 H1 Z" fill="#ea3a1c" stroke="#222" stroke-width="0.7"/><path d="M1,13 H7 Q9,11.8 15,12.2 V15 H1 Z" fill="#f6da0a" stroke="#222" stroke-width="0.7"/></svg>
<div class="tr" style="top:900px;letter-spacing:-0.17px">Draw Materials on all Queries</div>
<style>
.mdiwin{position:absolute}
.wbtn{position:absolute;top:10px;width:32px;height:18px;border-radius:3px}
.cv text{font-family:"DejaVu Sans","Liberation Sans",sans-serif;fill:#111}
</style>
<div class="abs" style="left:309px;top:160px;width:1606px;height:945px;border-bottom:1px solid #9c9c9c;background:#f0f0f0"></div>
<div class="abs" style="left:309px;top:160px;width:1605px;height:3px;background:linear-gradient(180deg,#4c4c4c,#6a6a6a 60%,#8a8a8a)"></div>
<div class="abs" style="left:309px;top:160px;width:3px;height:920px;background:linear-gradient(90deg,#7a7a7a,#484848 40%,#5a5a5a)"></div>
<div class="abs" style="left:309px;top:1078.7px;width:803px;height:1.3px;background:#4a4a4a"></div>
<div class="abs" style="left:311.5px;top:162.5px;width:7px;height:7px;background:#a2a2a2"></div>
<div class="abs" style="left:1104.5px;top:162.5px;width:7px;height:7px;background:#a2a2a2"></div>
<div class="abs" style="left:1111px;top:162.5px;width:7px;height:7px;background:#a2a2a2"></div>
<div class="abs" style="left:1907.5px;top:162.5px;width:7px;height:7px;background:#a2a2a2"></div>
<div class="abs" style="left:311.8px;top:162px;width:799.2px;height:916.8px;background:#d6e3f1;border-top-left-radius:6px;border-top-right-radius:6px;overflow:hidden"><div class="abs" style="left:0;top:0;width:800px;height:32px;background:linear-gradient(180deg,#bccadb 0%,#c9d6e5 45%,#dbe6f2 100%)"></div></div>
<svg class="abs" style="left:321px;top:172px" width="17" height="18" viewBox="0 0 17 18">
<rect x="2.4" y="7" width="4" height="8" fill="#9a9a3e"/><rect x="6.4" y="4" width="4" height="11" fill="#e9b941"/><rect x="10.4" y="8" width="4" height="7" fill="#e25a1e"/>
<path d="M0.8,1 V16.2 H16.5" fill="none" stroke="#3a3a4a" stroke-width="1.2"/></svg>
<div class="t" style="left:341px;top:175px;font-size:12px;color:#a29eae;letter-spacing:-0.102px">Project 1* - Chart View - Registered to Rocscience Inc., Toronto Office</div>
<div class="abs" style="left:1002px;top:172px;width:32px;height:18px;border-radius:3px;border:1px solid #8b97b6;background:linear-gradient(180deg,#c7d3e3,#d3dfed);box-shadow:inset 0 0 0 1px rgba(255,255,255,0.45)"></div><svg class="abs" style="left:1002px;top:172px" width="32" height="18" viewBox="0 0 32 18"><rect x="10.5" y="8.5" width="10" height="3.6" rx="0.8" fill="#fff" stroke="#3d4663" stroke-width="1"/></svg>
<div class="abs" style="left:1036px;top:172px;width:32px;height:18px;border-radius:3px;border:1px solid #8b97b6;background:linear-gradient(180deg,#c7d3e3,#d3dfed);box-shadow:inset 0 0 0 1px rgba(255,255,255,0.45)"></div><svg class="abs" style="left:1036px;top:172px" width="32" height="18" viewBox="0 0 32 18"><rect x="11" y="5" width="10" height="8" rx="1" fill="#fff" stroke="#3d4663" stroke-width="1"/><rect x="13.8" y="8" width="4.4" height="2.2" fill="#aebcd6" stroke="#3d4663" stroke-width="0.9"/></svg>
<div class="abs" style="left:1070px;top:172px;width:32px;height:18px;border-radius:3px;border:1px solid #8b97b6;background:linear-gradient(180deg,#c7d3e3,#d3dfed);box-shadow:inset 0 0 0 1px rgba(255,255,255,0.45)"></div><svg class="abs" style="left:1070px;top:172px" width="32" height="18" viewBox="0 0 32 18"><path d="M11.4,4.6 L20,12.6 M20,4.6 L11.4,12.6" stroke="#3d4663" stroke-width="3.9"/><path d="M12.2,5.4 L19.2,11.8 M19.2,5.4 L12.2,11.8" stroke="#fff" stroke-width="2.1"/></svg>
<div class="abs" style="left:319px;top:193px;width:783.5px;height:878px;background:#fff;border-left:2px solid #737373;border-top:2px solid #737373;border-right:1px solid #eceff2;border-bottom:1px solid #e6e6e6"></div>
<svg class="abs cv" style="left:321px;top:195px" width="781" height="875" viewBox="321 195 781 875">
<defs><linearGradient id="lb" gradientUnits="userSpaceOnUse" x1="393" y1="244" x2="861" y2="964"><stop offset="0" stop-color="#fbfbf8"/><stop offset="1" stop-color="#f8f8f2"/></linearGradient><linearGradient id="db" gradientUnits="userSpaceOnUse" x1="393" y1="244" x2="861" y2="964"><stop offset="0" stop-color="#f4f4ea"/><stop offset="1" stop-color="#f0f0e4"/></linearGradient><radialGradient id="mk" cx="0.4" cy="0.35" r="0.7"><stop offset="0" stop-color="#f8c24a"/><stop offset="1" stop-color="#eda31c"/></radialGradient><clipPath id="pc"><rect x="393.5" y="244" width="467.5" height="720"/></clipPath></defs>
<rect x="393.6" y="244" width="66.6" height="720" fill="url(#db)"/>
<rect x="460.2" y="244" width="66.6" height="720" fill="url(#lb)"/>
<rect x="526.8" y="244" width="66.6" height="720" fill="url(#db)"/>
<rect x="593.5" y="244" width="66.6" height="720" fill="url(#lb)"/>
<rect x="660.1" y="244" width="66.6" height="720" fill="url(#db)"/>
<rect x="726.7" y="244" width="66.6" height="720" fill="url(#lb)"/>
<rect x="793.3" y="244" width="66.6" height="720" fill="url(#db)"/>
<path d="M393.5,244.5 H860.7 V964" fill="none" stroke="#c9caa4" stroke-width="1"/>
<path d="M393.5,244 V964 M393,963.5 H861" stroke="#000" stroke-width="1.2" fill="none"/>
<path d="M391,251.7 H393 M388,267.2 H393 M391,282.7 H393 M391,298.1 H393 M388,313.6 H393 M391,329.1 H393 M391,344.5 H393 M388,360.0 H393 M391,375.5 H393 M391,390.9 H393 M388,406.4 H393 M391,421.9 H393 M391,437.3 H393 M388,452.8 H393 M391,468.3 H393 M391,483.7 H393 M388,499.2 H393 M391,514.7 H393 M391,530.1 H393 M388,545.6 H393 M391,561.1 H393 M391,576.5 H393 M388,592.0 H393 M391,607.5 H393 M391,622.9 H393 M388,638.4 H393 M391,653.9 H393 M391,669.3 H393 M388,684.8 H393 M391,700.3 H393 M391,715.7 H393 M388,731.2 H393 M391,746.7 H393 M391,762.1 H393 M388,777.6 H393 M391,793.1 H393 M391,808.5 H393 M388,824.0 H393 M391,839.5 H393 M391,854.9 H393 M388,870.4 H393 M391,885.9 H393 M391,901.3 H393 M388,916.8 H393 M391,932.3 H393 M391,947.7 H393 M393.6,964 V969 M406.9,964 V966.5 M420.2,964 V966.5 M433.6,964 V966.5 M446.9,964 V966.5 M460.2,964 V969 M473.5,964 V966.5 M486.9,964 V966.5 M500.2,964 V966.5 M513.5,964 V966.5 M526.8,964 V969 M540.2,964 V966.5 M553.5,964 V966.5 M566.8,964 V966.5 M580.1,964 V966.5 M593.5,964 V969 M606.8,964 V966.5 M620.1,964 V966.5 M633.4,964 V966.5 M646.8,964 V966.5 M660.1,964 V969 M673.4,964 V966.5 M686.7,964 V966.5 M700.1,964 V966.5 M713.4,964 V966.5 M726.7,964 V969 M740.0,964 V966.5 M753.3,964 V966.5 M766.7,964 V966.5 M780.0,964 V966.5 M793.3,964 V969 M806.6,964 V966.5 M820.0,964 V966.5 M833.3,964 V966.5 M846.6,964 V966.5 M859.9,964 V969" stroke="#000" stroke-width="1.1" fill="none"/>
<text x="384.5" y="273.0" font-size="16" text-anchor="end">4</text>
<text x="384.5" y="319.4" font-size="16" text-anchor="end">6</text>
<text x="384.5" y="365.8" font-size="16" text-anchor="end">8</text>
<text x="384.5" y="412.2" font-size="16" text-anchor="end">10</text>
<text x="384.5" y="458.6" font-size="16" text-anchor="end">12</text>
<text x="384.5" y="505.0" font-size="16" text-anchor="end">14</text>
<text x="384.5" y="551.4" font-size="16" text-anchor="end">16</text>
<text x="384.5" y="597.8" font-size="16" text-anchor="end">18</text>
<text x="384.5" y="644.2" font-size="16" text-anchor="end">20</text>
<text x="384.5" y="690.6" font-size="16" text-anchor="end">22</text>
<text x="384.5" y="737.0" font-size="16" text-anchor="end">24</text>
<text x="384.5" y="783.4" font-size="16" text-anchor="end">26</text>
<text x="384.5" y="829.8" font-size="16" text-anchor="end">28</text>
<text x="384.5" y="876.2" font-size="16" text-anchor="end">30</text>
<text x="384.5" y="922.6" font-size="16" text-anchor="end">32</text>
<text x="393.6" y="985" font-size="16" text-anchor="middle">0</text>
<text x="460.2" y="985" font-size="16" text-anchor="middle">2</text>
<text x="526.8" y="985" font-size="16" text-anchor="middle">4</text>
<text x="593.5" y="985" font-size="16" text-anchor="middle">6</text>
<text x="660.1" y="985" font-size="16" text-anchor="middle">8</text>
<text x="726.7" y="985" font-size="16" text-anchor="middle">10</text>
<text x="793.3" y="985" font-size="16" text-anchor="middle">12</text>
<g clip-path="url(#pc)"><path d="M393.6,943.3 C397.4,943.0 408.8,942.9 416.6,941.6 C424.4,940.3 432.7,938.3 440.5,935.3 C448.3,932.3 455.8,928.3 463.4,923.5 C471.0,918.7 478.5,913.0 486.3,906.3 C494.1,899.6 502.2,892.1 510.1,883.4 C518.0,874.7 525.7,865.2 533.4,854.2 C541.1,843.2 548.6,831.4 556.4,817.3 C564.2,803.2 572.4,788.2 580.2,769.5 C588.0,750.8 595.3,736.3 603.2,705.3 C611.1,674.3 619.5,617.4 627.4,583.3 C635.2,549.1 642.6,523.7 650.3,500.4 C658.0,477.1 665.7,460.1 673.6,443.6 C681.5,427.1 689.7,413.8 697.5,401.4 C705.3,389.0 712.8,379.2 720.4,369.4 C728.0,359.6 735.6,350.4 743.4,342.4 C751.2,334.4 759.5,328.0 767.3,321.3 C775.1,314.6 782.6,308.0 790.3,302.4 C797.9,296.8 805.4,292.2 813.2,287.5 C821.1,282.8 829.7,278.1 837.4,274.1 C845.1,270.1 855.9,265.1 859.6,263.3" fill="none" stroke="#e8a216" stroke-width="2"/>
<circle cx="393.6" cy="943.3" r="4.1" fill="url(#mk)" stroke="#b98414" stroke-width="0.9"/>
<circle cx="416.6" cy="941.6" r="4.1" fill="url(#mk)" stroke="#b98414" stroke-width="0.9"/>
<circle cx="440.5" cy="935.3" r="4.1" fill="url(#mk)" stroke="#b98414" stroke-width="0.9"/>
<circle cx="463.4" cy="923.5" r="4.1" fill="url(#mk)" stroke="#b98414" stroke-width="0.9"/>
<circle cx="486.3" cy="906.3" r="4.1" fill="url(#mk)" stroke="#b98414" stroke-width="0.9"/>
<circle cx="510.1" cy="883.4" r="4.1" fill="url(#mk)" stroke="#b98414" stroke-width="0.9"/>
<circle cx="533.4" cy="854.2" r="4.1" fill="url(#mk)" stroke="#b98414" stroke-width="0.9"/>
<circle cx="556.4" cy="817.3" r="4.1" fill="url(#mk)" stroke="#b98414" stroke-width="0.9"/>
<circle cx="580.2" cy="769.5" r="4.1" fill="url(#mk)" stroke="#b98414" stroke-width="0.9"/>
<circle cx="603.2" cy="705.3" r="4.1" fill="url(#mk)" stroke="#b98414" stroke-width="0.9"/>
<circle cx="627.4" cy="583.3" r="4.1" fill="url(#mk)" stroke="#b98414" stroke-width="0.9"/>
<circle cx="650.3" cy="500.4" r="4.1" fill="url(#mk)" stroke="#b98414" stroke-width="0.9"/>
<circle cx="673.6" cy="443.6" r="4.1" fill="url(#mk)" stroke="#b98414" stroke-width="0.9"/>
<circle cx="697.5" cy="401.4" r="4.1" fill="url(#mk)" stroke="#b98414" stroke-width="0.9"/>
<circle cx="720.4" cy="369.4" r="4.1" fill="url(#mk)" stroke="#b98414" stroke-width="0.9"/>
<circle cx="743.4" cy="342.4" r="4.1" fill="url(#mk)" stroke="#b98414" stroke-width="0.9"/>
<circle cx="767.3" cy="321.3" r="4.1" fill="url(#mk)" stroke="#b98414" stroke-width="0.9"/>
<circle cx="790.3" cy="302.4" r="4.1" fill="url(#mk)" stroke="#b98414" stroke-width="0.9"/>
<circle cx="813.2" cy="287.5" r="4.1" fill="url(#mk)" stroke="#b98414" stroke-width="0.9"/>
<circle cx="837.4" cy="274.1" r="4.1" fill="url(#mk)" stroke="#b98414" stroke-width="0.9"/>
<circle cx="859.6" cy="263.3" r="4.1" fill="url(#mk)" stroke="#b98414" stroke-width="0.9"/>
</g>
<text x="466.6" y="228.7" font-size="29.3" font-weight="bold" letter-spacing="0.297">Distance vs. Total Settlement</text>
<text x="546" y="1014.6" font-size="20.5" font-weight="bold" letter-spacing="1.067">Distance (m)</text>
<text transform="translate(352.6,741) rotate(-90)" font-size="22" font-weight="bold" letter-spacing="-0.133">Total Settlement (mm)</text>
<text x="616.3" y="1041.4" font-size="16" letter-spacing="0.454">Reference Stage: None</text>
<text x="576.6" y="1062.9" font-size="16" letter-spacing="0.432">Total Settlement at Depth = 0 m</text>
<rect x="870.5" y="618.5" width="225" height="26" fill="#fff" stroke="#c7caa5" stroke-width="1"/>
<path d="M874,631.3 H892" stroke="#e8a216" stroke-width="1.6"/><circle cx="883.4" cy="631.3" r="7.5" fill="url(#mk)" stroke="#b98414" stroke-width="1"/>
<text x="898.6" y="636.6" font-size="15.8" letter-spacing="0.518">Query Line 1 (Stage 1)</text>
</svg>
<div class="abs" style="left:1111px;top:162px;width:803px;height:918px;background:#000;border-top-left-radius:7px;border-top-right-radius:7px"></div>
<div class="abs" style="left:1113px;top:162px;width:800px;height:917px;background:#b9d0ea;border-top-left-radius:6px;border-top-right-radius:6px;overflow:hidden;border-bottom:1px solid #2ec4e6"><div class="abs" style="left:0;top:0;width:800px;height:32px;background:linear-gradient(180deg,#9ab3d3 0%,#a6bfdd 40%,#bcd3ee 100%)"></div></div>
<svg class="abs" style="left:1123px;top:172px" width="15" height="17" viewBox="0 0 19 20" preserveAspectRatio="none">
<polygon points="9.5,0.6 17.8,5 17.8,14.6 9.5,19.2 1.2,14.6 1.2,5" fill="#3e3e3e"/>
<polygon points="1.2,6.5 9.5,12.5 9.5,19.2 1.2,14.6" fill="#e2560d"/>
<polygon points="17.8,6.5 9.5,12.5 9.5,19.2 17.8,14.6" fill="#b23c05"/>
<polygon points="2.6,6 9.5,11 16.4,6 16.4,9.2 9.5,14.6 2.6,9.2" fill="#fff"/>
<polygon points="9.5,0.6 17.8,5 9.5,9.6 1.2,5" fill="#555"/></svg>
<div class="t" style="left:1142px;top:175px;font-size:12px;color:#000;letter-spacing:-0.104px">Project 1* - Plan/3D View - Registered to Rocscience Inc., Toronto Office</div>
<div class="abs" style="left:1803px;top:172px;width:32px;height:18px;border-radius:3px;border:1px solid #64779f;background:linear-gradient(180deg,#c6d9ee 0%,#bed3ea 45%,#9db7d8 52%,#abc4e1 100%);box-shadow:inset 0 0 0 1px rgba(255,255,255,0.5)"></div><svg class="abs" style="left:1803px;top:172px" width="32" height="18" viewBox="0 0 32 18"><rect x="10.5" y="8.5" width="10" height="3.6" rx="0.8" fill="#fff" stroke="#3d4663" stroke-width="1"/></svg>
<div class="abs" style="left:1837px;top:172px;width:32px;height:18px;border-radius:3px;border:1px solid #64779f;background:linear-gradient(180deg,#c6d9ee 0%,#bed3ea 45%,#9db7d8 52%,#abc4e1 100%);box-shadow:inset 0 0 0 1px rgba(255,255,255,0.5)"></div><svg class="abs" style="left:1837px;top:172px" width="32" height="18" viewBox="0 0 32 18"><rect x="11" y="5" width="10" height="8" rx="1" fill="#fff" stroke="#3d4663" stroke-width="1"/><rect x="13.8" y="8" width="4.4" height="2.2" fill="#aebcd6" stroke="#3d4663" stroke-width="0.9"/></svg>
<div class="abs" style="left:1871px;top:172px;width:32px;height:18px;border-radius:3px;border:1px solid #5a1c1c;background:linear-gradient(180deg,#eab4a6 0%,#dd8c7a 45%,#c5442c 52%,#d0604a 100%);box-shadow:inset 0 0 0 1px rgba(255,255,255,0.5)"></div><svg class="abs" style="left:1871px;top:172px" width="32" height="18" viewBox="0 0 32 18"><path d="M11.4,4.6 L20,12.6 M20,4.6 L11.4,12.6" stroke="#3d4663" stroke-width="3.9"/><path d="M12.2,5.4 L19.2,11.8 M19.2,5.4 L12.2,11.8" stroke="#fff" stroke-width="2.1"/></svg>
<div class="abs" style="left:1121px;top:193px;width:783.5px;height:879px;background:#f0f0f0;border-left:1px solid #7c7c7c;border-top:2px solid #808080;border-right:1px solid #fff"></div>
<div class="abs" style="left:1122px;top:195px;width:393px;height:857px;background:#fff"></div>
<div class="abs" style="left:1515px;top:195px;width:6px;height:857px;background:linear-gradient(90deg,#fff 0,#fff 1px,#f0f0f0 1px,#f0f0f0 4px,#9a9a9a 4px,#696969 6px)"></div>
<div class="abs" style="left:1521px;top:195px;width:382.5px;height:857px;background:#fff"></div>
<div class="abs" style="left:1122px;top:1052px;width:782px;height:1px;background:#fff"></div><div class="abs" style="left:1122px;top:1053px;width:782px;height:1px;background:#000"></div>
<svg class="abs" style="left:1122px;top:195px" width="393" height="857" viewBox="1122 195 393 857" font-family="Liberation Sans,sans-serif">
<defs><radialGradient id="rg" gradientUnits="userSpaceOnUse" cx="1321.4" cy="619.0" r="250">
<stop offset="0.0000" stop-color="#a71603"/>
<stop offset="0.1031" stop-color="#a71603"/>
<stop offset="0.1031" stop-color="#b81f05"/>
<stop offset="0.1421" stop-color="#b81f05"/>
<stop offset="0.1421" stop-color="#c82907"/>
<stop offset="0.1716" stop-color="#c82907"/>
<stop offset="0.1716" stop-color="#d6350a"/>
<stop offset="0.1951" stop-color="#d6350a"/>
<stop offset="0.1951" stop-color="#e2410e"/>
<stop offset="0.2161" stop-color="#e2410e"/>
<stop offset="0.2161" stop-color="#ec5012"/>
<stop offset="0.2346" stop-color="#ec5012"/>
<stop offset="0.2346" stop-color="#f36018"/>
<stop offset="0.2506" stop-color="#f36018"/>
<stop offset="0.2506" stop-color="#f8711d"/>
<stop offset="0.2646" stop-color="#f8711d"/>
<stop offset="0.2646" stop-color="#fb8223"/>
<stop offset="0.2786" stop-color="#fb8223"/>
<stop offset="0.2786" stop-color="#fc9328"/>
<stop offset="0.2891" stop-color="#fc9328"/>
<stop offset="0.2891" stop-color="#fda52d"/>
<stop offset="0.2996" stop-color="#fda52d"/>
<stop offset="0.2996" stop-color="#fbb530"/>
<stop offset="0.3107" stop-color="#fbb530"/>
<stop offset="0.3107" stop-color="#f8c530"/>
<stop offset="0.3162" stop-color="#f8c530"/>
<stop offset="0.3162" stop-color="#f0d332"/>
<stop offset="0.3217" stop-color="#f0d332"/>
<stop offset="0.3217" stop-color="#e3df34"/>
<stop offset="0.3272" stop-color="#e3df34"/>
<stop offset="0.3272" stop-color="#d5ea38"/>
<stop offset="0.3332" stop-color="#d5ea38"/>
<stop offset="0.3332" stop-color="#c4f03a"/>
<stop offset="0.3387" stop-color="#c4f03a"/>
<stop offset="0.3387" stop-color="#b3f63f"/>
<stop offset="0.3442" stop-color="#b3f63f"/>
<stop offset="0.3442" stop-color="#a2fa44"/>
<stop offset="0.3517" stop-color="#a2fa44"/>
<stop offset="0.3517" stop-color="#8efc4c"/>
<stop offset="0.3597" stop-color="#8efc4c"/>
<stop offset="0.3597" stop-color="#78fa58"/>
<stop offset="0.3682" stop-color="#78fa58"/>
<stop offset="0.3682" stop-color="#64f868"/>
<stop offset="0.3762" stop-color="#64f868"/>
<stop offset="0.3762" stop-color="#54f27b"/>
<stop offset="0.3867" stop-color="#54f27b"/>
<stop offset="0.3867" stop-color="#44eb8e"/>
<stop offset="0.3987" stop-color="#44eb8e"/>
<stop offset="0.3987" stop-color="#34e1a0"/>
<stop offset="0.4107" stop-color="#34e1a0"/>
<stop offset="0.4107" stop-color="#29d7b2"/>
<stop offset="0.4252" stop-color="#29d7b2"/>
<stop offset="0.4252" stop-color="#23ccc4"/>
<stop offset="0.4412" stop-color="#23ccc4"/>
<stop offset="0.4412" stop-color="#20c0d4"/>
<stop offset="0.4602" stop-color="#20c0d4"/>
<stop offset="0.4602" stop-color="#20b2e2"/>
<stop offset="0.4812" stop-color="#20b2e2"/>
<stop offset="0.4812" stop-color="#24a6ec"/>
<stop offset="0.5063" stop-color="#24a6ec"/>
<stop offset="0.5063" stop-color="#2b9cf0"/>
<stop offset="0.5353" stop-color="#2b9cf0"/>
<stop offset="0.5353" stop-color="#328ef2"/>
<stop offset="0.5693" stop-color="#328ef2"/>
<stop offset="0.5693" stop-color="#3b7ef2"/>
<stop offset="0.6103" stop-color="#3b7ef2"/>
<stop offset="0.6103" stop-color="#456de4"/>
<stop offset="0.6603" stop-color="#456de4"/>
<stop offset="0.6603" stop-color="#505ed1"/>
<stop offset="0.7394" stop-color="#505ed1"/>
<stop offset="0.7394" stop-color="#544db6"/>
<stop offset="0.8424" stop-color="#544db6"/>
<stop offset="0.8424" stop-color="#533c97"/>
<stop offset="0.9645" stop-color="#533c97"/>
<stop offset="0.9645" stop-color="#462b74"/>
</radialGradient>
<pattern id="hat" width="4.1" height="4.1" patternUnits="userSpaceOnUse" patternTransform="rotate(-59)"><path d="M1,0 V4.1" stroke="#3a1a9a" stroke-width="1.05"/></pattern>
</defs>
<rect x="1149.7" y="446.6" width="344.8" height="344.8" fill="url(#rg)"/>
<rect x="1149.7" y="446.6" width="344.8" height="344.8" fill="none" stroke="#3c3c3c" stroke-width="1" stroke-dasharray="6 3 2 3"/>
<circle cx="1149.7" cy="446.6" r="2.2" fill="#fff" stroke="#000" stroke-width="0.9"/>
<circle cx="1494.5" cy="446.6" r="2.2" fill="#fff" stroke="#000" stroke-width="0.9"/>
<circle cx="1149.7" cy="791.4" r="2.2" fill="#fff" stroke="#000" stroke-width="0.9"/>
<circle cx="1494.5" cy="791.4" r="2.2" fill="#fff" stroke="#000" stroke-width="0.9"/>
<circle cx="1321.4" cy="619.0" r="86.5" fill="none" stroke="#12126e" stroke-width="1.9"/>
<rect x="1299.5" y="658.5" width="77.5" height="18" fill="#fff" stroke="#000" stroke-width="1"/>
<text x="1302" y="671.2" font-size="10.5" fill="#000" letter-spacing="-0.015">Circular Load 1</text>
<path d="M1321.4,619.0 V791.4" stroke="#4a1c8c" stroke-width="1.5"/><path d="M1321.7,619.0 V791.4" stroke="#c0303a" stroke-width="0.6"/>
<polygon points="1321.4,620.0 1358.4,620.0 1358.3,625.4 1321.4,625.4" fill="url(#hat)" stroke="#3a1a9a" stroke-width="1"/>
<polygon points="1321.4,628.7 1358.3,628.7 1358.1,634.1 1321.4,634.1" fill="url(#hat)" stroke="#3a1a9a" stroke-width="1"/>
<polygon points="1321.4,637.3 1358.0,637.3 1357.6,642.7 1321.4,642.7" fill="url(#hat)" stroke="#3a1a9a" stroke-width="1"/>
<polygon points="1321.4,645.9 1357.4,645.9 1356.9,651.3 1321.4,651.3" fill="url(#hat)" stroke="#3a1a9a" stroke-width="1"/>
<polygon points="1321.4,654.6 1356.6,654.6 1355.9,660.0 1321.4,660.0" fill="url(#hat)" stroke="#3a1a9a" stroke-width="1"/>
<polygon points="1321.4,663.2 1355.5,663.2 1354.6,668.6 1321.4,668.6" fill="url(#hat)" stroke="#3a1a9a" stroke-width="1"/>
<polygon points="1321.4,671.8 1354.1,671.8 1352.9,677.2 1321.4,677.2" fill="url(#hat)" stroke="#3a1a9a" stroke-width="1"/>
<polygon points="1321.4,680.5 1352.3,680.5 1350.8,685.9 1321.4,685.9" fill="url(#hat)" stroke="#3a1a9a" stroke-width="1"/>
<polygon points="1321.4,689.1 1350.0,689.1 1348.0,694.5 1321.4,694.5" fill="url(#hat)" stroke="#3a1a9a" stroke-width="1"/>
<polygon points="1321.4,697.7 1347.0,697.7 1343.2,703.1 1321.4,703.1" fill="url(#hat)" stroke="#3a1a9a" stroke-width="1"/>
<polygon points="1321.4,706.4 1341.0,706.4 1338.5,711.8 1321.4,711.8" fill="url(#hat)" stroke="#3a1a9a" stroke-width="1"/>
<polygon points="1321.4,715.0 1337.1,715.0 1335.3,720.4 1321.4,720.4" fill="url(#hat)" stroke="#3a1a9a" stroke-width="1"/>
<polygon points="1321.4,723.6 1334.3,723.6 1333.0,729.0 1321.4,729.0" fill="url(#hat)" stroke="#3a1a9a" stroke-width="1"/>
<polygon points="1321.4,732.3 1332.3,732.3 1331.3,737.7 1321.4,737.7" fill="url(#hat)" stroke="#3a1a9a" stroke-width="1"/>
<polygon points="1321.4,740.9 1330.8,740.9 1329.9,746.3 1321.4,746.3" fill="url(#hat)" stroke="#3a1a9a" stroke-width="1"/>
<polygon points="1321.4,749.5 1329.5,749.5 1328.8,754.9 1321.4,754.9" fill="url(#hat)" stroke="#3a1a9a" stroke-width="1"/>
<polygon points="1321.4,758.2 1328.5,758.2 1327.9,763.6 1321.4,763.6" fill="url(#hat)" stroke="#3a1a9a" stroke-width="1"/>
<polygon points="1321.4,766.8 1327.6,766.8 1327.1,772.2 1321.4,772.2" fill="url(#hat)" stroke="#3a1a9a" stroke-width="1"/>
<polygon points="1321.4,775.4 1326.8,775.4 1326.4,780.8 1321.4,780.8" fill="url(#hat)" stroke="#3a1a9a" stroke-width="1"/>
<polygon points="1321.4,784.1 1326.2,784.1 1325.9,789.5 1321.4,789.5" fill="url(#hat)" stroke="#3a1a9a" stroke-width="1"/>
<rect x="1318.5" y="616.8" width="24" height="14.5" fill="#fff" stroke="#000" stroke-width="1"/>
<text x="1321.6" y="627.3" font-size="7.6" fill="#f0303a" letter-spacing="-0.1">33.16</text>
<circle cx="1320.7" cy="619" r="3.3" fill="#f8bf12" stroke="#e0a000" stroke-width="0.8" stroke-dasharray="1.2 1"/>
<rect x="1318.5" y="788.8" width="15.6" height="15" fill="#fff" stroke="#000" stroke-width="1"/>
<text x="1321" y="799.6" font-size="7.6" fill="#4040f0">3.8</text>
<path d="M1140.6,195 V1033.3 H1514" stroke="#000" stroke-width="1.2" fill="none"/>
<path d="M1137.0,1026.5 H1139.1 M1137.0,1013.5 H1139.1 M1137.0,1001.5 H1139.1 M1134.8,989.5 H1139.1 M1137.0,976.5 H1139.1 M1137.0,964.5 H1139.1 M1137.0,952.5 H1139.1 M1137.0,939.5 H1139.1 M1133.6,927.5 H1139.1 M1137.0,915.5 H1139.1 M1137.0,902.5 H1139.1 M1137.0,890.5 H1139.1 M1137.0,878.5 H1139.1 M1134.8,865.5 H1139.1 M1137.0,853.5 H1139.1 M1137.0,841.5 H1139.1 M1137.0,828.5 H1139.1 M1137.0,816.5 H1139.1 M1133.6,804.5 H1139.1 M1137.0,791.5 H1139.1 M1137.0,779.5 H1139.1 M1137.0,767.5 H1139.1 M1137.0,754.5 H1139.1 M1134.8,742.5 H1139.1 M1137.0,730.5 H1139.1 M1137.0,717.5 H1139.1 M1137.0,705.5 H1139.1 M1137.0,693.5 H1139.1 M1133.6,680.5 H1139.1 M1137.0,668.5 H1139.1 M1137.0,656.5 H1139.1 M1137.0,643.5 H1139.1 M1137.0,631.5 H1139.1 M1134.8,619.5 H1139.1 M1137.0,606.5 H1139.1 M1137.0,594.5 H1139.1 M1137.0,582.5 H1139.1 M1137.0,569.5 H1139.1 M1133.6,557.5 H1139.1 M1137.0,545.5 H1139.1 M1137.0,532.5 H1139.1 M1137.0,520.5 H1139.1 M1137.0,508.5 H1139.1 M1134.8,495.5 H1139.1 M1137.0,483.5 H1139.1 M1137.0,471.5 H1139.1 M1137.0,458.5 H1139.1 M1137.0,446.5 H1139.1 M1133.6,434.5 H1139.1 M1137.0,421.5 H1139.1 M1137.0,409.5 H1139.1 M1137.0,396.5 H1139.1 M1137.0,384.5 H1139.1 M1134.8,372.5 H1139.1 M1137.0,359.5 H1139.1 M1137.0,347.5 H1139.1 M1137.0,335.5 H1139.1 M1137.0,322.5 H1139.1 M1133.6,310.5 H1139.1 M1137.0,298.5 H1139.1 M1137.0,285.5 H1139.1 M1137.0,273.5 H1139.1 M1137.0,261.5 H1139.1 M1134.8,248.5 H1139.1 M1137.0,236.5 H1139.1 M1137.0,224.5 H1139.1 M1137.0,211.5 H1139.1 M1137.0,199.5 H1139.1 M1148.5,1034.2 V1036.4 M1161.5,1034.2 V1036.4 M1173.5,1034.2 V1036.4 M1185.5,1034.2 V1036.4 M1198.5,1034.2 V1038.6 M1210.5,1034.2 V1036.4 M1222.5,1034.2 V1036.4 M1235.5,1034.2 V1036.4 M1247.5,1034.2 V1036.4 M1259.5,1034.2 V1039.8 M1272.5,1034.2 V1036.4 M1284.5,1034.2 V1036.4 M1296.5,1034.2 V1036.4 M1309.5,1034.2 V1036.4 M1321.5,1034.2 V1038.6 M1333.5,1034.2 V1036.4 M1346.5,1034.2 V1036.4 M1358.5,1034.2 V1036.4 M1370.5,1034.2 V1036.4 M1383.5,1034.2 V1039.8 M1395.5,1034.2 V1036.4 M1407.5,1034.2 V1036.4 M1420.5,1034.2 V1036.4 M1432.5,1034.2 V1036.4 M1444.5,1034.2 V1038.6 M1457.5,1034.2 V1036.4 M1469.5,1034.2 V1036.4 M1481.5,1034.2 V1036.4 M1494.5,1034.2 V1036.4 M1506.5,1034.2 V1039.8" stroke="#000" stroke-width="1.1" fill="none"/>
<text transform="translate(1132.6,310.7) rotate(-90)" font-size="11" text-anchor="middle" fill="#000">30</text>
<text transform="translate(1132.6,434.0) rotate(-90)" font-size="11" text-anchor="middle" fill="#000">20</text>
<text transform="translate(1132.6,557.4) rotate(-90)" font-size="11" text-anchor="middle" fill="#000">10</text>
<text transform="translate(1132.6,680.7) rotate(-90)" font-size="11" text-anchor="middle" fill="#000">0</text>
<text transform="translate(1132.6,804.1) rotate(-90)" font-size="11" text-anchor="middle" fill="#000">-10</text>
<text transform="translate(1132.6,927.4) rotate(-90)" font-size="11" text-anchor="middle" fill="#000">-20</text>
<text x="1259.8" y="1048.6" font-size="11" text-anchor="middle" fill="#000">0</text>
<text x="1383.1" y="1048.6" font-size="11" text-anchor="middle" fill="#000">10</text>
<text x="1505.9" y="1048.6" font-size="11" text-anchor="middle" fill="#000">20</text>
</svg>
<svg class="abs" style="left:1521px;top:195px" width="383" height="857" viewBox="1521 195 383 857">
<polygon points="1521,436 1904,436 1904,839.3 1521,837" fill="#fffdd0"/>
<polygon points="1521,790 1530.7,779.3 1712,779.3 1712,807 1904,807 1904,839.3 1521,837" fill="#ffffd8"/>
<path d="M1530.7,438 V779.3 H1712 M1530.7,779.3 L1521,790" stroke="#c9c870" stroke-width="1" fill="none"/>
<path d="M1521,837 L1904,839.3" stroke="#7a7a10" stroke-width="1.8" fill="none"/>
<g shape-rendering="crispEdges"><rect x="1712.0" y="437.0" width="192" height="370" fill="#968a80"/>
<path d="M1904,718 1904,719.5 1904,724 1904,729 1904,733.5 1904,738 1904,743 1904,747.5 1904,752.5 1904,757 1904,761.5 1904,764 1904,765 1900,766 1899,766.5 1895.5,767.5 1891,768 1887,769 1882.5,770 1878,771 1873.5,772 1869.5,772.5 1865,773.5 1860.5,774.5 1856,775 1852,775.5 1850.5,776 1847.5,776 1843,777 1838.5,777.5 1834.5,778.5 1830,779 1825.5,779.5 1821.5,780 1817,780 1812.5,780 1810.5,780.5 1808,781 1804,781.5 1799.5,782 1795,782.5 1790.5,783 1786.5,783 1782,783.5 1777.5,783.5 1773,784 1769,784 1764.5,784 1760,784.5 1755.5,784.5 1751.5,784.5 1747,784.5 1742.5,785 1738,785 1734,785 1729.5,785 1725,785 1723,785 1720.5,785.5 1718,785 1716.5,785 1715,785 1712,785.5 1712,785 1712,780.5 1712,776 1712,771 1712,766.5 1712,761.5 1716.5,761 1720.5,761.5 1725,761 1729.5,761 1734,761 1738,760.5 1742.5,760.5 1747,760 1751.5,760 1755.5,759.5 1760,759.5 1764.5,759 1769,758.5 1773,758.5 1777.5,758 1782,757.5 1784.5,757 1786.5,756.5 1790.5,756.5 1795,755.5 1799.5,755 1804,754.5 1808,753 1810,752.5 1812.5,751 1817,751 1821.5,751 1825.5,749.5 1830,748.5 1834.5,747.5 1838.5,746 1843,745 1847.5,743.5 1850,743 1852,742.5 1856,741 1860.5,739.5 1864.5,738 1865,738 1869.5,736.5 1873.5,735 1877,733.5 1878,733 1882.5,731.5 1887,729 1887.5,729 1891,727 1895.5,725 1897.5,724 1900,723 1904,720.5 1904,719.5 1904,718Z" fill="#9b8e8e"/>
<path d="M1904,671.5 1904,672.5 1904,677 1904,681.5 1904,686.5 1904,691 1904,696 1904,700.5 1904,705 1904,710 1904,714.5 1904,718 1904,719.5 1904,720.5 1900,723 1897.5,724 1895.5,725 1891,727 1887.5,729 1887,729 1882.5,731.5 1878,733 1877,733.5 1873.5,735 1869.5,736.5 1865,738 1864.5,738 1860.5,739.5 1856,741 1852,742.5 1850,743 1847.5,743.5 1843,745 1838.5,746 1834.5,747.5 1830,748.5 1825.5,749.5 1821.5,751 1817,751 1812.5,751 1810,752.5 1808,753 1804,754.5 1799.5,755 1795,755.5 1790.5,756.5 1786.5,756.5 1784.5,757 1782,757.5 1777.5,758 1773,758.5 1769,758.5 1764.5,759 1760,759.5 1755.5,759.5 1751.5,760 1747,760 1742.5,760.5 1738,760.5 1734,761 1729.5,761 1725,761 1720.5,761.5 1716.5,761 1712,761.5 1712,757 1712,752.5 1712,747.5 1712,743 1712,740 1716.5,739.5 1720.5,740 1725,739.5 1729.5,739.5 1734,739.5 1738,739 1742.5,739 1747,738.5 1751.5,738 1755.5,737.5 1760,737.5 1764.5,736.5 1769,736 1773,735.5 1777.5,734.5 1782,734 1785,733.5 1786.5,733 1790.5,732.5 1795,731.5 1799.5,731 1804,729.5 1806,729 1808,728 1812.5,725 1817,724.5 1821.5,724.5 1822.5,724 1825.5,722.5 1830,721.5 1834.5,719.5 1835,719.5 1838.5,717.5 1843,716 1845.5,714.5 1847.5,713.5 1852,712 1856,710 1856,709.5 1860.5,707.5 1864.5,705 1865,705 1869.5,702 1872.5,700.5 1873.5,700 1878,697 1880,696 1882.5,694 1886.5,691 1887,690.5 1891,687.5 1892.5,686.5 1895.5,684 1898,681.5 1900,680 1903.5,677 1904,676 1904,672.5 1904,671.5Z" fill="#a2949f"/>
<path d="M1904,622 1904,625 1904,630 1904,634.5 1904,639.5 1904,644 1904,649 1904,653.5 1904,658 1904,663 1904,667.5 1904,671.5 1904,672.5 1904,676 1903.5,677 1900,680 1898,681.5 1895.5,684 1892.5,686.5 1891,687.5 1887,690.5 1886.5,691 1882.5,694 1880,696 1878,697 1873.5,700 1872.5,700.5 1869.5,702 1865,705 1864.5,705 1860.5,707.5 1856,709.5 1856,710 1852,712 1847.5,713.5 1845.5,714.5 1843,716 1838.5,717.5 1835,719.5 1834.5,719.5 1830,721.5 1825.5,722.5 1822.5,724 1821.5,724.5 1817,724.5 1812.5,725 1808,728 1806,729 1804,729.5 1799.5,731 1795,731.5 1790.5,732.5 1786.5,733 1785,733.5 1782,734 1777.5,734.5 1773,735.5 1769,736 1764.5,736.5 1760,737.5 1755.5,737.5 1751.5,738 1747,738.5 1742.5,739 1738,739 1734,739.5 1729.5,739.5 1725,739.5 1720.5,740 1716.5,739.5 1712,740 1712,738 1712,733.5 1712,729 1712,724 1712,720.5 1716.5,720 1720.5,720.5 1725,720 1729.5,720 1734,719.5 1737.5,719.5 1738,719.5 1742.5,719 1747,718.5 1751.5,718.5 1755.5,717.5 1760,717 1764.5,716 1769,715.5 1773,715 1773.5,714.5 1777.5,714 1782,713 1786.5,711.5 1790.5,711 1794,710 1795,709.5 1799.5,708.5 1804,707 1807,705 1808,704.5 1812.5,701 1816,700.5 1817,700.5 1821.5,700.5 1825.5,698 1830,696 1830.5,696 1834.5,693.5 1838.5,691 1843,688.5 1846,686.5 1847.5,685.5 1852,683 1854,681.5 1856,680 1860.5,677 1865,673.5 1866.5,672.5 1869.5,669.5 1872,667.5 1873.5,666.5 1877.5,663 1878,662 1882,658 1882.5,658 1886.5,653.5 1887,653 1890,649 1891,647.5 1894,644 1895.5,642.5 1898,639.5 1900,636.5 1901,634.5 1904,630 1904,625 1904,622Z" fill="#a69eb5"/>
<path d="M1904,562 1904,564 1904,569 1904,573.5 1904,578 1904,583 1904,587.5 1904,592.5 1904,597 1904,601.5 1904,606.5 1904,611 1904,616 1904,620.5 1904,622 1904,625 1904,630 1901,634.5 1900,636.5 1898,639.5 1895.5,642.5 1894,644 1891,647.5 1890,649 1887,653 1886.5,653.5 1882.5,658 1882,658 1878,662 1877.5,663 1873.5,666.5 1872,667.5 1869.5,669.5 1866.5,672.5 1865,673.5 1860.5,677 1856,680 1854,681.5 1852,683 1847.5,685.5 1846,686.5 1843,688.5 1838.5,691 1834.5,693.5 1830.5,696 1830,696 1825.5,698 1821.5,700.5 1817,700.5 1816,700.5 1812.5,701 1808,704.5 1807,705 1804,707 1799.5,708.5 1795,709.5 1794,710 1790.5,711 1786.5,711.5 1782,713 1777.5,714 1773.5,714.5 1773,715 1769,715.5 1764.5,716 1760,717 1755.5,717.5 1751.5,718.5 1747,718.5 1742.5,719 1738,719.5 1737.5,719.5 1734,719.5 1729.5,720 1725,720 1720.5,720.5 1716.5,720 1712,720.5 1712,719.5 1712,714.5 1712,710 1712,705 1712,703 1716.5,702.5 1720.5,702.5 1725,702 1729.5,702 1734,702 1738,701.5 1742.5,701 1745.5,700.5 1747,700.5 1751.5,700 1755.5,699 1760,698.5 1764.5,697.5 1769,696.5 1773,696 1777.5,694.5 1782,693.5 1786.5,692 1790.5,691 1795,689.5 1799.5,688 1803.5,686.5 1804,686 1808,683.5 1810,681.5 1812.5,679 1817,678 1821.5,678 1822.5,677 1825.5,675 1830,672.5 1834.5,669.5 1837,667.5 1838.5,666 1843,663 1843.5,663 1847.5,659 1848.5,658 1852,656 1854.5,653.5 1856,652 1859.5,649 1860.5,648 1864,644 1865,643 1868,639.5 1869.5,638 1872.5,634.5 1873.5,633.5 1876.5,630 1878,627.5 1879.5,625 1882.5,621.5 1883,620.5 1886,616 1887,614 1888.5,611 1891,606.5 1891,606 1893.5,601.5 1895.5,598 1896,597 1898,592.5 1900,588 1900,587.5 1902,583 1904,578 1904,577 1904,573.5 1904,569 1904,564 1904,562Z" fill="#aaaacc"/>
<path d="M1904,437 1904,441.5 1904,446.5 1904,451 1904,456 1904,460.5 1904,465 1904,470 1904,474.5 1904,479.5 1904,484 1904,489 1904,493.5 1904,498 1904,503 1904,507.5 1904,512.5 1904,517 1904,521.5 1904,526.5 1904,531 1904,536 1904,540.5 1904,545 1904,550 1904,554.5 1904,559.5 1904,562 1904,564 1904,569 1904,573.5 1904,577 1904,578 1902,583 1900,587.5 1900,588 1898,592.5 1896,597 1895.5,598 1893.5,601.5 1891,606 1891,606.5 1888.5,611 1887,614 1886,616 1883,620.5 1882.5,621.5 1879.5,625 1878,627.5 1876.5,630 1873.5,633.5 1872.5,634.5 1869.5,638 1868,639.5 1865,643 1864,644 1860.5,648 1859.5,649 1856,652 1854.5,653.5 1852,656 1848.5,658 1847.5,659 1843.5,663 1843,663 1838.5,666 1837,667.5 1834.5,669.5 1830,672.5 1825.5,675 1822.5,677 1821.5,678 1817,678 1812.5,679 1810,681.5 1808,683.5 1804,686 1803.5,686.5 1799.5,688 1795,689.5 1790.5,691 1786.5,692 1782,693.5 1777.5,694.5 1773,696 1769,696.5 1764.5,697.5 1760,698.5 1755.5,699 1751.5,700 1747,700.5 1745.5,700.5 1742.5,701 1738,701.5 1734,702 1729.5,702 1725,702 1720.5,702.5 1716.5,702.5 1712,703 1712,700.5 1712,696 1712,691 1712,686.5 1713,686.5 1716.5,686 1720.5,686.5 1725,686 1729.5,686 1734,685.5 1738,685 1742.5,684.5 1747,683.5 1751.5,683.5 1755.5,682 1759,681.5 1760,681.5 1764.5,680.5 1769,679.5 1773,678.5 1777,677 1777.5,677 1782,676 1786.5,674 1790.5,672.5 1791.5,672.5 1795,670.5 1799.5,669 1802.5,667.5 1804,667 1808,663.5 1809,663 1812.5,658.5 1814,658 1817,657.5 1821.5,657 1825.5,653.5 1825.5,653 1830,650.5 1832,649 1834.5,646.5 1837,644 1838.5,642.5 1842.5,639.5 1843,639 1846.5,634.5 1847.5,633.5 1851.5,630 1852,630 1856,625 1860,620.5 1860.5,619.5 1863.5,616 1865,613.5 1866.5,611 1869.5,606.5 1872.5,601.5 1873.5,600 1875.5,597 1878,592.5 1878,592 1880.5,587.5 1882.5,583 1884.5,578 1886.5,573.5 1887,572 1888,569 1889.5,564 1891,559.5 1893,554.5 1894,550 1895.5,545 1896.5,540.5 1897.5,536 1898.5,531 1899.5,526.5 1900,522.5 1900,521.5 1901,517 1901.5,512.5 1902,507.5 1902.5,503 1903,498 1903,493.5 1903.5,489 1903.5,484 1904,479.5 1904,474.5 1904,470 1904,465 1904,460.5 1904,456 1904,451 1904,446.5 1904,441.5 1904,437Z" fill="#a5b1d6"/>
<path d="M1891,437 1895.5,437 1900,437 1904,437 1904,441.5 1904,446.5 1904,451 1904,456 1904,460.5 1904,465 1904,470 1904,474.5 1904,479.5 1903.5,484 1903.5,489 1903,493.5 1903,498 1902.5,503 1902,507.5 1901.5,512.5 1901,517 1900,521.5 1900,522.5 1899.5,526.5 1898.5,531 1897.5,536 1896.5,540.5 1895.5,545 1894,550 1893,554.5 1891,559.5 1889.5,564 1888,569 1887,572 1886.5,573.5 1884.5,578 1882.5,583 1880.5,587.5 1878,592 1878,592.5 1875.5,597 1873.5,600 1872.5,601.5 1869.5,606.5 1866.5,611 1865,613.5 1863.5,616 1860.5,619.5 1860,620.5 1856,625 1852,630 1851.5,630 1847.5,633.5 1846.5,634.5 1843,639 1842.5,639.5 1838.5,642.5 1837,644 1834.5,646.5 1832,649 1830,650.5 1825.5,653 1825.5,653.5 1821.5,657 1817,657.5 1814,658 1812.5,658.5 1809,663 1808,663.5 1804,667 1802.5,667.5 1799.5,669 1795,670.5 1791.5,672.5 1790.5,672.5 1786.5,674 1782,676 1777.5,677 1777,677 1773,678.5 1769,679.5 1764.5,680.5 1760,681.5 1759,681.5 1755.5,682 1751.5,683.5 1747,683.5 1742.5,684.5 1738,685 1734,685.5 1729.5,686 1725,686 1720.5,686.5 1716.5,686 1713,686.5 1712,686.5 1712,681.5 1712,677 1712,672.5 1712,671.5 1716.5,671 1720.5,671.5 1725,671 1729.5,670.5 1734,670.5 1738,669.5 1742.5,669.5 1747,668 1751.5,668 1752.5,667.5 1755.5,666.5 1760,666 1764.5,664.5 1769,663.5 1770.5,663 1773,662 1777.5,660.5 1782,659 1784,658 1786.5,657 1790.5,655.5 1795,653.5 1799.5,651.5 1804,649 1808,645 1809,644 1812.5,639.5 1813,639.5 1817,638 1821.5,637 1824,634.5 1825.5,633 1829.5,630 1830,629.5 1834.5,625 1838.5,620.5 1838.5,620 1843,616 1843,615.5 1846.5,611 1847.5,609.5 1850.5,606.5 1852,604.5 1854,601.5 1856,598.5 1857,597 1860,592.5 1860.5,591.5 1863,587.5 1865,584 1865.5,583 1867.5,578 1869.5,574.5 1870,573.5 1872,569 1873.5,565.5 1874.5,564 1876,559.5 1878,554.5 1878,553.5 1879.5,550 1881,545 1882,540.5 1882.5,539.5 1883.5,536 1884.5,531 1885.5,526.5 1886.5,521.5 1887,518.5 1887,517 1888,512.5 1888.5,507.5 1889,503 1889.5,498 1890,493.5 1890,489 1890.5,484 1890.5,479.5 1891,474.5 1891,470 1891,465 1891,460.5 1891,456 1891,451 1891,446.5 1891,441.5 1891,437Z" fill="#a0b8dd"/>
<path d="M1882.5,437 1887,437 1891,437 1891,441.5 1891,446.5 1891,451 1891,456 1891,460.5 1891,465 1891,470 1891,474.5 1890.5,479.5 1890.5,484 1890,489 1890,493.5 1889.5,498 1889,503 1888.5,507.5 1888,512.5 1887,517 1887,518.5 1886.5,521.5 1885.5,526.5 1884.5,531 1883.5,536 1882.5,539.5 1882,540.5 1881,545 1879.5,550 1878,553.5 1878,554.5 1876,559.5 1874.5,564 1873.5,565.5 1872,569 1870,573.5 1869.5,574.5 1867.5,578 1865.5,583 1865,584 1863,587.5 1860.5,591.5 1860,592.5 1857,597 1856,598.5 1854,601.5 1852,604.5 1850.5,606.5 1847.5,609.5 1846.5,611 1843,615.5 1843,616 1838.5,620 1838.5,620.5 1834.5,625 1830,629.5 1829.5,630 1825.5,633 1824,634.5 1821.5,637 1817,638 1813,639.5 1812.5,639.5 1809,644 1808,645 1804,649 1799.5,651.5 1795,653.5 1790.5,655.5 1786.5,657 1784,658 1782,659 1777.5,660.5 1773,662 1770.5,663 1769,663.5 1764.5,664.5 1760,666 1755.5,666.5 1752.5,667.5 1751.5,668 1747,668 1742.5,669.5 1738,669.5 1734,670.5 1729.5,670.5 1725,671 1720.5,671.5 1716.5,671 1712,671.5 1712,667.5 1712,663 1712,658 1712,657.5 1716.5,657 1720.5,657.5 1725,657 1729.5,657 1734,656.5 1738,655.5 1742.5,655.5 1747,654 1751.5,653.5 1755.5,652 1760,651.5 1764.5,650 1768,649 1769,648.5 1773,647 1777.5,645.5 1781,644 1782,644 1786.5,641.5 1790.5,640 1791.5,639.5 1795,637 1799.5,635 1800,634.5 1804,632 1806,630 1808,628 1810,625 1812.5,621.5 1815,620.5 1817,619.5 1821.5,618.5 1824,616 1825.5,614 1828.5,611 1830,609.5 1833,606.5 1834.5,605 1836.5,601.5 1838.5,599 1840.5,597 1843,593.5 1844,592.5 1846.5,587.5 1847.5,586 1850,583 1852,580 1853,578 1855.5,573.5 1856,572.5 1858,569 1860.5,564 1860.5,563.5 1862.5,559.5 1864.5,554.5 1865,553.5 1866,550 1868,545 1869.5,540.5 1869.5,540 1871,536 1872.5,531 1873.5,526.5 1873.5,526 1874.5,521.5 1875.5,517 1876.5,512.5 1877.5,507.5 1878,503 1878,502 1878.5,498 1879,493.5 1879.5,489 1880,484 1880,479.5 1880.5,474.5 1880.5,470 1880.5,465 1881,460.5 1881,456 1881,451 1881,446.5 1881,441.5 1881,437 1882.5,437Z" fill="#9cc0e1"/>
<path d="M1873.5,437 1878,437 1881,437 1881,441.5 1881,446.5 1881,451 1881,456 1881,460.5 1880.5,465 1880.5,470 1880.5,474.5 1880,479.5 1880,484 1879.5,489 1879,493.5 1878.5,498 1878,502 1878,503 1877.5,507.5 1876.5,512.5 1875.5,517 1874.5,521.5 1873.5,526 1873.5,526.5 1872.5,531 1871,536 1869.5,540 1869.5,540.5 1868,545 1866,550 1865,553.5 1864.5,554.5 1862.5,559.5 1860.5,563.5 1860.5,564 1858,569 1856,572.5 1855.5,573.5 1853,578 1852,580 1850,583 1847.5,586 1846.5,587.5 1844,592.5 1843,593.5 1840.5,597 1838.5,599 1836.5,601.5 1834.5,605 1833,606.5 1830,609.5 1828.5,611 1825.5,614 1824,616 1821.5,618.5 1817,619.5 1815,620.5 1812.5,621.5 1810,625 1808,628 1806,630 1804,632 1800,634.5 1799.5,635 1795,637 1791.5,639.5 1790.5,640 1786.5,641.5 1782,644 1781,644 1777.5,645.5 1773,647 1769,648.5 1768,649 1764.5,650 1760,651.5 1755.5,652 1751.5,653.5 1747,654 1742.5,655.5 1738,655.5 1734,656.5 1729.5,657 1725,657 1720.5,657.5 1716.5,657 1712,657.5 1712,653.5 1712,649 1712,645 1716.5,644 1720.5,644.5 1724.5,644 1725,644 1729.5,644 1734,643.5 1738,642.5 1742.5,642 1747,641 1751.5,640.5 1754,639.5 1755.5,638.5 1760,638 1764.5,636 1769,635 1769,634.5 1773,633 1777.5,631 1780.5,630 1782,629.5 1786.5,627 1790,625 1790.5,625 1795,622 1798,620.5 1799.5,619.5 1804,616.5 1804.5,616 1808,612 1808.5,611 1811.5,606.5 1812.5,605 1817,602.5 1820,601.5 1821.5,601 1824.5,597 1825.5,596 1829,592.5 1830,591 1832.5,587.5 1834.5,585.5 1836,583 1838.5,578.5 1839,578 1842.5,573.5 1843,572 1845,569 1847,564 1847.5,563.5 1850,559.5 1852,556 1852.5,554.5 1854.5,550 1856,546 1856.5,545 1858.5,540.5 1860,536 1860.5,534 1861.5,531 1863,526.5 1864.5,521.5 1865,519 1865.5,517 1866.5,512.5 1867.5,507.5 1868,503 1869,498 1869.5,493.5 1870,489 1870.5,484 1871,479.5 1871,474.5 1871.5,470 1871.5,465 1871.5,460.5 1871.5,456 1871.5,451 1871.5,446.5 1871.5,441.5 1871.5,437 1873.5,437Z" fill="#98c7e1"/>
<path d="M1865,437 1869.5,437 1871.5,437 1871.5,441.5 1871.5,446.5 1871.5,451 1871.5,456 1871.5,460.5 1871.5,465 1871.5,470 1871,474.5 1871,479.5 1870.5,484 1870,489 1869.5,493.5 1869,498 1868,503 1867.5,507.5 1866.5,512.5 1865.5,517 1865,519 1864.5,521.5 1863,526.5 1861.5,531 1860.5,534 1860,536 1858.5,540.5 1856.5,545 1856,546 1854.5,550 1852.5,554.5 1852,556 1850,559.5 1847.5,563.5 1847,564 1845,569 1843,572 1842.5,573.5 1839,578 1838.5,578.5 1836,583 1834.5,585.5 1832.5,587.5 1830,591 1829,592.5 1825.5,596 1824.5,597 1821.5,601 1820,601.5 1817,602.5 1812.5,605 1811.5,606.5 1808.5,611 1808,612 1804.5,616 1804,616.5 1799.5,619.5 1798,620.5 1795,622 1790.5,625 1790,625 1786.5,627 1782,629.5 1780.5,630 1777.5,631 1773,633 1769,634.5 1769,635 1764.5,636 1760,638 1755.5,638.5 1754,639.5 1751.5,640.5 1747,641 1742.5,642 1738,642.5 1734,643.5 1729.5,644 1725,644 1724.5,644 1720.5,644.5 1716.5,644 1712,645 1712,644 1712,639.5 1712,634.5 1712,633 1716.5,632 1720.5,632.5 1725,632 1729.5,632 1734,631.5 1738,630.5 1742.5,630 1747,628.5 1751.5,628 1755.5,626 1760,625 1764.5,623.5 1769,622 1772,620.5 1773,620 1777.5,618 1782,616 1782.5,616 1786.5,613.5 1790.5,611 1791,611 1795,608 1798,606.5 1799.5,605.5 1804,602 1804,601.5 1808,597 1811,592.5 1812.5,589.5 1815.5,587.5 1817,586.5 1821.5,585 1822.5,583 1825.5,579 1826,578 1830,573.5 1833,569 1834.5,567 1836,564 1838.5,559.5 1838.5,559 1841.5,554.5 1843,551.5 1844,550 1846,545 1847.5,541 1847.5,540.5 1850,536 1852,531 1853.5,526.5 1855,521.5 1856,517.5 1856.5,517 1857.5,512.5 1859,507.5 1860,503 1860.5,498.5 1860.5,498 1861.5,493.5 1862,489 1862.5,484 1863,479.5 1863.5,474.5 1863.5,470 1864,465 1864,460.5 1864,456 1864,451 1864,446.5 1864,441.5 1864,437 1865,437Z" fill="#94cde0"/>
<path d="M1860.5,437 1864,437 1864,441.5 1864,446.5 1864,451 1864,456 1864,460.5 1864,465 1863.5,470 1863.5,474.5 1863,479.5 1862.5,484 1862,489 1861.5,493.5 1860.5,498 1860.5,498.5 1860,503 1859,507.5 1857.5,512.5 1856.5,517 1856,517.5 1855,521.5 1853.5,526.5 1852,531 1850,536 1847.5,540.5 1847.5,541 1846,545 1844,550 1843,551.5 1841.5,554.5 1838.5,559 1838.5,559.5 1836,564 1834.5,567 1833,569 1830,573.5 1826,578 1825.5,579 1822.5,583 1821.5,585 1817,586.5 1815.5,587.5 1812.5,589.5 1811,592.5 1808,597 1804,601.5 1804,602 1799.5,605.5 1798,606.5 1795,608 1791,611 1790.5,611 1786.5,613.5 1782.5,616 1782,616 1777.5,618 1773,620 1772,620.5 1769,622 1764.5,623.5 1760,625 1755.5,626 1751.5,628 1747,628.5 1742.5,630 1738,630.5 1734,631.5 1729.5,632 1725,632 1720.5,632.5 1716.5,632 1712,633 1712,630 1712,625 1712,621.5 1716.5,621 1720.5,621.5 1725,620.5 1729,620.5 1729.5,620.5 1734,620 1738,619 1742.5,618.5 1747,617 1751.5,616.5 1752.5,616 1755.5,614.5 1760,613.5 1764.5,611.5 1765.5,611 1769,610 1773,608 1776,606.5 1777.5,605.5 1782,603.5 1784.5,601.5 1786.5,600.5 1790.5,598.5 1792.5,597 1795,595 1799,592.5 1799.5,592 1804,588 1804,587.5 1808,583 1808,582.5 1810.5,578 1812.5,575 1814.5,573.5 1817,571.5 1821.5,569.5 1821.5,569 1825,564 1825.5,562.5 1828,559.5 1830,556.5 1831,554.5 1834,550 1834.5,549 1836.5,545 1838.5,540.5 1838.5,540 1841,536 1843,531 1844.5,526.5 1846.5,521.5 1847.5,517.5 1847.5,517 1849.5,512.5 1851,507.5 1852,504 1852,503 1853,498 1854,493.5 1855,489 1855.5,484 1856,479.5 1856,477 1856.5,474.5 1857,470 1857,465 1857,460.5 1857.5,456 1857.5,451 1857.5,446.5 1857.5,441.5 1857.5,437 1860.5,437Z" fill="#91d2de"/>
<path d="M1852,437 1856,437 1857.5,437 1857.5,441.5 1857.5,446.5 1857.5,451 1857.5,456 1857,460.5 1857,465 1857,470 1856.5,474.5 1856,477 1856,479.5 1855.5,484 1855,489 1854,493.5 1853,498 1852,503 1852,504 1851,507.5 1849.5,512.5 1847.5,517 1847.5,517.5 1846.5,521.5 1844.5,526.5 1843,531 1841,536 1838.5,540 1838.5,540.5 1836.5,545 1834.5,549 1834,550 1831,554.5 1830,556.5 1828,559.5 1825.5,562.5 1825,564 1821.5,569 1821.5,569.5 1817,571.5 1814.5,573.5 1812.5,575 1810.5,578 1808,582.5 1808,583 1804,587.5 1804,588 1799.5,592 1799,592.5 1795,595 1792.5,597 1790.5,598.5 1786.5,600.5 1784.5,601.5 1782,603.5 1777.5,605.5 1776,606.5 1773,608 1769,610 1765.5,611 1764.5,611.5 1760,613.5 1755.5,614.5 1752.5,616 1751.5,616.5 1747,617 1742.5,618.5 1738,619 1734,620 1729.5,620.5 1729,620.5 1725,620.5 1720.5,621.5 1716.5,621 1712,621.5 1712,620.5 1712,616 1712,611 1712.5,611 1716.5,610.5 1720.5,611 1725,610 1729.5,610 1734,609.5 1738,608.5 1742.5,608 1746.5,606.5 1747,606.5 1751.5,605.5 1755.5,603.5 1760,602.5 1762,601.5 1764.5,600.5 1769,598.5 1772.5,597 1773,596.5 1777.5,594 1781.5,592.5 1782,592 1786.5,589 1788.5,587.5 1790.5,586.5 1795,583 1795,582.5 1799.5,579.5 1801,578 1804,575 1805,573.5 1808,569.5 1808.5,569 1811,564 1812.5,561 1815,559.5 1817,557.5 1821.5,555 1821.5,554.5 1824,550 1825.5,547.5 1827,545 1830,540.5 1832.5,536 1834.5,532 1835,531 1837,526.5 1838.5,521.5 1840.5,517 1842,512.5 1843,509.5 1843.5,507.5 1845,503 1846,498 1847,493.5 1847.5,490.5 1848,489 1849,484 1849.5,479.5 1850,474.5 1850.5,470 1851,465 1851,460.5 1851.5,456 1851.5,451 1851.5,446.5 1851.5,441.5 1851.5,437 1852,437Z" fill="#90d7da"/>
<path d="M1847.5,437 1851.5,437 1851.5,441.5 1851.5,446.5 1851.5,451 1851.5,456 1851,460.5 1851,465 1850.5,470 1850,474.5 1849.5,479.5 1849,484 1848,489 1847.5,490.5 1847,493.5 1846,498 1845,503 1843.5,507.5 1843,509.5 1842,512.5 1840.5,517 1838.5,521.5 1837,526.5 1835,531 1834.5,532 1832.5,536 1830,540.5 1827,545 1825.5,547.5 1824,550 1821.5,554.5 1821.5,555 1817,557.5 1815,559.5 1812.5,561 1811,564 1808.5,569 1808,569.5 1805,573.5 1804,575 1801,578 1799.5,579.5 1795,582.5 1795,583 1790.5,586.5 1788.5,587.5 1786.5,589 1782,592 1781.5,592.5 1777.5,594 1773,596.5 1772.5,597 1769,598.5 1764.5,600.5 1762,601.5 1760,602.5 1755.5,603.5 1751.5,605.5 1747,606.5 1746.5,606.5 1742.5,608 1738,608.5 1734,609.5 1729.5,610 1725,610 1720.5,611 1716.5,610.5 1712.5,611 1712,611 1712,606.5 1712,601.5 1716.5,601 1720.5,601 1725,600.5 1729.5,600 1734,599.5 1738,598.5 1742.5,598 1745,597 1747,596 1751.5,595.5 1755.5,593.5 1760,592.5 1764.5,590 1769,588 1770,587.5 1773,586 1777.5,583.5 1778.5,583 1782,581 1785.5,578 1786.5,577.5 1790.5,575 1792.5,573.5 1795,571 1798,569 1799.5,567.5 1803,564 1804,563 1806.5,559.5 1808,557 1809.5,554.5 1811.5,550 1812.5,548.5 1816,545 1817,544.5 1821.5,541 1821.5,540.5 1824,536 1825.5,533 1826.5,531 1829.5,526.5 1830,525 1831.5,521.5 1833.5,517 1834.5,515 1835.5,512.5 1837,507.5 1838.5,503 1838.5,502 1840,498 1841,493.5 1842.5,489 1843,485 1843.5,484 1844,479.5 1844.5,474.5 1845,470 1845.5,465 1846,460.5 1846,456 1846,451 1846,446.5 1846,441.5 1846,437 1847.5,437Z" fill="#90ddd3"/>
<path d="M1843,437 1846,437 1846,441.5 1846,446.5 1846,451 1846,456 1846,460.5 1845.5,465 1845,470 1844.5,474.5 1844,479.5 1843.5,484 1843,485 1842.5,489 1841,493.5 1840,498 1838.5,502 1838.5,503 1837,507.5 1835.5,512.5 1834.5,515 1833.5,517 1831.5,521.5 1830,525 1829.5,526.5 1826.5,531 1825.5,533 1824,536 1821.5,540.5 1821.5,541 1817,544.5 1816,545 1812.5,548.5 1811.5,550 1809.5,554.5 1808,557 1806.5,559.5 1804,563 1803,564 1799.5,567.5 1798,569 1795,571 1792.5,573.5 1790.5,575 1786.5,577.5 1785.5,578 1782,581 1778.5,583 1777.5,583.5 1773,586 1770,587.5 1769,588 1764.5,590 1760,592.5 1755.5,593.5 1751.5,595.5 1747,596 1745,597 1742.5,598 1738,598.5 1734,599.5 1729.5,600 1725,600.5 1720.5,601 1716.5,601 1712,601.5 1712,597 1712,592.5 1712,592 1716.5,591.5 1720.5,592 1725,591 1729.5,591 1734,590.5 1738,589 1742.5,588.5 1745,587.5 1747,587 1751.5,586 1755.5,584 1759,583 1760,582.5 1764.5,580.5 1769,578.5 1769,578 1773,576 1777,573.5 1777.5,573.5 1782,571 1784.5,569 1786.5,567.5 1790.5,564.5 1791,564 1795,560.5 1796.5,559.5 1799.5,556.5 1801.5,554.5 1804,552 1805,550 1808,545.5 1808.5,545 1810.5,540.5 1812.5,536 1813,536 1817,531.5 1817.5,531 1821.5,528 1822,526.5 1824.5,521.5 1825.5,519 1826.5,517 1829,512.5 1830,510 1831,507.5 1832.5,503 1834.5,498 1835.5,493.5 1837,489 1838,484 1838.5,479.5 1839,479.5 1839.5,474.5 1840.5,470 1841,465 1841,460.5 1841.5,456 1841.5,451 1841.5,446.5 1841.5,441.5 1841.5,437 1843,437Z" fill="#90e3cc"/>
<path d="M1838.5,437 1841.5,437 1841.5,441.5 1841.5,446.5 1841.5,451 1841.5,456 1841,460.5 1841,465 1840.5,470 1839.5,474.5 1839,479.5 1838.5,479.5 1838,484 1837,489 1835.5,493.5 1834.5,498 1832.5,503 1831,507.5 1830,510 1829,512.5 1826.5,517 1825.5,519 1824.5,521.5 1822,526.5 1821.5,528 1817.5,531 1817,531.5 1813,536 1812.5,536 1810.5,540.5 1808.5,545 1808,545.5 1805,550 1804,552 1801.5,554.5 1799.5,556.5 1796.5,559.5 1795,560.5 1791,564 1790.5,564.5 1786.5,567.5 1784.5,569 1782,571 1777.5,573.5 1777,573.5 1773,576 1769,578 1769,578.5 1764.5,580.5 1760,582.5 1759,583 1755.5,584 1751.5,586 1747,587 1745,587.5 1742.5,588.5 1738,589 1734,590.5 1729.5,591 1725,591 1720.5,592 1716.5,591.5 1712,592 1712,587.5 1712,583.5 1716.5,583 1720.5,583 1723,583 1725,582.5 1729.5,582 1734,581.5 1738,580.5 1742.5,580 1746.5,578 1747,578 1751.5,577 1755.5,575 1760,573.5 1764.5,571 1769,569 1769.5,569 1773,567 1777,564 1777.5,564 1782,561.5 1784,559.5 1786.5,557.5 1790.5,554.5 1795,550 1795.5,550 1799.5,546.5 1800.5,545 1804,541.5 1804.5,540.5 1807.5,536 1808,534.5 1810,531 1812,526.5 1812.5,525 1815.5,521.5 1817,520 1820,517 1821.5,515.5 1822.5,512.5 1824.5,507.5 1825.5,505.5 1827,503 1828.5,498 1830,494.5 1830.5,493.5 1832,489 1833,484 1834.5,479.5 1834.5,478.5 1835,474.5 1836,470 1836.5,465 1837,460.5 1837.5,456 1837.5,451 1837.5,446.5 1837.5,441.5 1837.5,437 1838.5,437Z" fill="#93e8c4"/>
<path d="M1834.5,437 1837.5,437 1837.5,441.5 1837.5,446.5 1837.5,451 1837.5,456 1837,460.5 1836.5,465 1836,470 1835,474.5 1834.5,478.5 1834.5,479.5 1833,484 1832,489 1830.5,493.5 1830,494.5 1828.5,498 1827,503 1825.5,505.5 1824.5,507.5 1822.5,512.5 1821.5,515.5 1820,517 1817,520 1815.5,521.5 1812.5,525 1812,526.5 1810,531 1808,534.5 1807.5,536 1804.5,540.5 1804,541.5 1800.5,545 1799.5,546.5 1795.5,550 1795,550 1790.5,554.5 1786.5,557.5 1784,559.5 1782,561.5 1777.5,564 1777,564 1773,567 1769.5,569 1769,569 1764.5,571 1760,573.5 1755.5,575 1751.5,577 1747,578 1746.5,578 1742.5,580 1738,580.5 1734,581.5 1729.5,582 1725,582.5 1723,583 1720.5,583 1716.5,583 1712,583.5 1712,583 1712,578 1712,575.5 1716.5,574.5 1720.5,575 1725,574.5 1729.5,574 1732.5,573.5 1734,573.5 1738,572 1742.5,571.5 1747,569.5 1751,569 1751.5,568.5 1755.5,566.5 1760,565 1762,564 1764.5,562.5 1769,560.5 1771,559.5 1773,558 1777.5,555 1778,554.5 1782,552.5 1784.5,550 1786.5,548.5 1790.5,545 1795,540.5 1795.5,540.5 1799.5,536.5 1800,536 1804,531.5 1804,531 1807,526.5 1808,524 1809.5,521.5 1811.5,517 1812.5,514 1814,512.5 1817,508.5 1818,507.5 1821.5,503.5 1821.5,503 1823.5,498 1825,493.5 1825.5,492 1827,489 1828.5,484 1830,479.5 1830,478.5 1831,474.5 1832,470 1832.5,465 1833,460.5 1833.5,456 1834,451 1834,446.5 1834,441.5 1834,437 1834.5,437Z" fill="#96edbc"/>
<path d="M1834,441.5 1834,446.5 1834,451 1833.5,456 1833,460.5 1832.5,465 1832,470 1831,474.5 1830,478.5 1830,479.5 1828.5,484 1827,489 1825.5,492 1825,493.5 1823.5,498 1821.5,503 1821.5,503.5 1818,507.5 1817,508.5 1814,512.5 1812.5,514 1811.5,517 1809.5,521.5 1808,524 1807,526.5 1804,531 1804,531.5 1800,536 1799.5,536.5 1795.5,540.5 1795,540.5 1790.5,545 1786.5,548.5 1784.5,550 1782,552.5 1778,554.5 1777.5,555 1773,558 1771,559.5 1769,560.5 1764.5,562.5 1762,564 1760,565 1755.5,566.5 1751.5,568.5 1751,569 1747,569.5 1742.5,571.5 1738,572 1734,573.5 1732.5,573.5 1729.5,574 1725,574.5 1720.5,575 1716.5,574.5 1712,575.5 1712,573.5 1712,569 1712,567.5 1716.5,567 1720.5,567.5 1725,566.5 1729.5,566 1734,565.5 1738,564.5 1740,564 1742.5,563.5 1747,561.5 1751.5,561 1754,559.5 1755.5,558.5 1760,557 1764.5,554.5 1769,552.5 1773,550 1773,549.5 1777.5,546.5 1779.5,545 1782,544 1785.5,540.5 1786.5,540 1790.5,536.5 1791.5,536 1795,532 1796,531 1799.5,527.5 1800.5,526.5 1804,522 1804,521.5 1807,517 1808,514.5 1809,512.5 1811,507.5 1812.5,504 1813.5,503 1816.5,498 1817,498 1820,493.5 1821.5,491.5 1822.5,489 1824,484 1825.5,479.5 1825.5,478.5 1827,474.5 1828,470 1829,465 1829.5,460.5 1830,457 1830,456 1830.5,451 1830.5,446.5 1830.5,441.5 1830.5,437 1834,437 1834,441.5Z" fill="#9ef2b4"/>
<path d="M1830,437 1830.5,437 1830.5,441.5 1830.5,446.5 1830.5,451 1830,456 1830,457 1829.5,460.5 1829,465 1828,470 1827,474.5 1825.5,478.5 1825.5,479.5 1824,484 1822.5,489 1821.5,491.5 1820,493.5 1817,498 1816.5,498 1813.5,503 1812.5,504 1811,507.5 1809,512.5 1808,514.5 1807,517 1804,521.5 1804,522 1800.5,526.5 1799.5,527.5 1796,531 1795,532 1791.5,536 1790.5,536.5 1786.5,540 1785.5,540.5 1782,544 1779.5,545 1777.5,546.5 1773,549.5 1773,550 1769,552.5 1764.5,554.5 1760,557 1755.5,558.5 1754,559.5 1751.5,561 1747,561.5 1742.5,563.5 1740,564 1738,564.5 1734,565.5 1729.5,566 1725,566.5 1720.5,567.5 1716.5,567 1712,567.5 1712,564 1712,560.5 1716.5,559.5 1720.5,560 1724.5,559.5 1725,559 1729.5,559 1734,558 1738,557 1742.5,556 1746,554.5 1747,554.5 1751.5,553.5 1755.5,551 1758.5,550 1760,549.5 1764.5,547 1767.5,545 1769,544.5 1773,542 1775,540.5 1777.5,538.5 1782,536 1786.5,531.5 1787,531 1790.5,528.5 1792.5,526.5 1795,523.5 1796.5,521.5 1799.5,519 1801,517 1804,513 1804.5,512.5 1807,507.5 1808,505.5 1809,503 1811,498 1812.5,494.5 1813,493.5 1816,489 1817,487.5 1819,484 1821.5,480.5 1821.5,479.5 1823,474.5 1824.5,470 1825.5,465 1825.5,463 1826,460.5 1827,456 1827.5,451 1827.5,446.5 1827.5,441.5 1827.5,437 1830,437Z" fill="#a5f6ab"/>
<path d="M1825.5,437 1827.5,437 1827.5,441.5 1827.5,446.5 1827.5,451 1827,456 1826,460.5 1825.5,463 1825.5,465 1824.5,470 1823,474.5 1821.5,479.5 1821.5,480.5 1819,484 1817,487.5 1816,489 1813,493.5 1812.5,494.5 1811,498 1809,503 1808,505.5 1807,507.5 1804.5,512.5 1804,513 1801,517 1799.5,519 1796.5,521.5 1795,523.5 1792.5,526.5 1790.5,528.5 1787,531 1786.5,531.5 1782,536 1777.5,538.5 1775,540.5 1773,542 1769,544.5 1767.5,545 1764.5,547 1760,549.5 1758.5,550 1755.5,551 1751.5,553.5 1747,554.5 1746,554.5 1742.5,556 1738,557 1734,558 1729.5,559 1725,559 1724.5,559.5 1720.5,560 1716.5,559.5 1712,560.5 1712,559.5 1712,554.5 1712,553.5 1716.5,553 1720.5,553 1725,552.5 1729.5,552 1734,551 1738,550 1742.5,549 1747,547 1751.5,546 1753,545 1755.5,544 1760,542.5 1763,540.5 1764.5,539.5 1769,537.5 1771,536 1773,534.5 1777.5,531 1778,531 1782,528.5 1784,526.5 1786.5,524 1789,521.5 1790.5,520.5 1794,517 1795,515.5 1798,512.5 1799.5,511 1802,507.5 1804,505 1805,503 1807.5,498 1808,497 1809.5,493.5 1811.5,489 1812.5,485.5 1813.5,484 1816,479.5 1817,477.5 1818.5,474.5 1821,470 1821.5,468.5 1822,465 1823,460.5 1824,456 1824.5,451 1825,446.5 1825,441.5 1825,437 1825.5,437Z" fill="#acf9a2"/>
<path d="M1825,441.5 1825,446.5 1824.5,451 1824,456 1823,460.5 1822,465 1821.5,468.5 1821,470 1818.5,474.5 1817,477.5 1816,479.5 1813.5,484 1812.5,485.5 1811.5,489 1809.5,493.5 1808,497 1807.5,498 1805,503 1804,505 1802,507.5 1799.5,511 1798,512.5 1795,515.5 1794,517 1790.5,520.5 1789,521.5 1786.5,524 1784,526.5 1782,528.5 1778,531 1777.5,531 1773,534.5 1771,536 1769,537.5 1764.5,539.5 1763,540.5 1760,542.5 1755.5,544 1753,545 1751.5,546 1747,547 1742.5,549 1738,550 1734,551 1729.5,552 1725,552.5 1720.5,553 1716.5,553 1712,553.5 1712,550 1712,547 1716.5,546 1720.5,546.5 1725,545.5 1729.5,545.5 1730,545 1734,544.5 1738,543.5 1742.5,542.5 1747,540.5 1751.5,539.5 1755.5,537 1759,536 1760,535.5 1764.5,533 1767.5,531 1769,530.5 1773,527.5 1774.5,526.5 1777.5,524 1781,521.5 1782,521 1786,517 1786.5,517 1790.5,513 1791.5,512.5 1795,508 1795.5,507.5 1799.5,503 1803,498 1804,497 1805.5,493.5 1808,489 1808,488.5 1810,484 1811.5,479.5 1812.5,476.5 1813.5,474.5 1816,470 1817,468 1818,465 1820,460.5 1821.5,456 1822,451 1822.5,446.5 1822.5,441.5 1822.5,437 1825,437 1825,441.5Z" fill="#b3fb9a"/>
<path d="M1821.5,437 1822.5,437 1822.5,441.5 1822.5,446.5 1822,451 1821.5,456 1820,460.5 1818,465 1817,468 1816,470 1813.5,474.5 1812.5,476.5 1811.5,479.5 1810,484 1808,488.5 1808,489 1805.5,493.5 1804,497 1803,498 1799.5,503 1795.5,507.5 1795,508 1791.5,512.5 1790.5,513 1786.5,517 1786,517 1782,521 1781,521.5 1777.5,524 1774.5,526.5 1773,527.5 1769,530.5 1767.5,531 1764.5,533 1760,535.5 1759,536 1755.5,537 1751.5,539.5 1747,540.5 1742.5,542.5 1738,543.5 1734,544.5 1730,545 1729.5,545.5 1725,545.5 1720.5,546.5 1716.5,546 1712,547 1712,545 1712,540.5 1716.5,540 1720.5,540 1725,539.5 1729.5,539 1734,538 1738,537 1742.5,536 1743,536 1747,534 1751.5,533 1754.5,531 1755.5,530.5 1760,529 1764,526.5 1764.5,526.5 1769,524 1772,521.5 1773,521 1777.5,517.5 1778.5,517 1782,514.5 1784,512.5 1786.5,510 1789,507.5 1790.5,506.5 1793.5,503 1795,501 1797.5,498 1799.5,496 1801,493.5 1804,489.5 1804,489 1806.5,484 1808,481 1809,479.5 1810.5,474.5 1812,470 1812.5,468.5 1814,465 1816,460.5 1817,458.5 1818,456 1819,451 1820,446.5 1820.5,441.5 1820.5,437 1821.5,437Z" fill="#bdfc93"/>
<path d="M1820.5,441.5 1820,446.5 1819,451 1818,456 1817,458.5 1816,460.5 1814,465 1812.5,468.5 1812,470 1810.5,474.5 1809,479.5 1808,481 1806.5,484 1804,489 1804,489.5 1801,493.5 1799.5,496 1797.5,498 1795,501 1793.5,503 1790.5,506.5 1789,507.5 1786.5,510 1784,512.5 1782,514.5 1778.5,517 1777.5,517.5 1773,521 1772,521.5 1769,524 1764.5,526.5 1764,526.5 1760,529 1755.5,530.5 1754.5,531 1751.5,533 1747,534 1743,536 1742.5,536 1738,537 1734,538 1729.5,539 1725,539.5 1720.5,540 1716.5,540 1712,540.5 1712,536 1712,534.5 1716.5,534 1720.5,534 1725,533.5 1729.5,533 1734,532 1737.5,531 1738,531 1742.5,530 1747,528 1751.5,527 1752,526.5 1755.5,524.5 1760,523 1762,521.5 1764.5,520 1769,517.5 1770,517 1773,514.5 1776.5,512.5 1777.5,511.5 1782,508 1782.5,507.5 1786.5,503.5 1787,503 1790.5,500 1792,498 1795,494.5 1796,493.5 1799.5,489.5 1800,489 1803,484 1804,482.5 1805.5,479.5 1808,474.5 1808,474 1809.5,470 1811,465 1812.5,461 1812.5,460.5 1814.5,456 1816,451 1817,448.5 1817.5,446.5 1818,441.5 1818,437 1820.5,437 1820.5,441.5Z" fill="#c7fc8e"/>
<path d="M1817,437 1818,437 1818,441.5 1817.5,446.5 1817,448.5 1816,451 1814.5,456 1812.5,460.5 1812.5,461 1811,465 1809.5,470 1808,474 1808,474.5 1805.5,479.5 1804,482.5 1803,484 1800,489 1799.5,489.5 1796,493.5 1795,494.5 1792,498 1790.5,500 1787,503 1786.5,503.5 1782.5,507.5 1782,508 1777.5,511.5 1776.5,512.5 1773,514.5 1770,517 1769,517.5 1764.5,520 1762,521.5 1760,523 1755.5,524.5 1752,526.5 1751.5,527 1747,528 1742.5,530 1738,531 1737.5,531 1734,532 1729.5,533 1725,533.5 1720.5,534 1716.5,534 1712,534.5 1712,531 1712,529 1716.5,528 1720.5,528.5 1725,527.5 1729.5,527 1733.5,526.5 1734,526.5 1738,525 1742.5,524 1747,522 1749,521.5 1751.5,521 1755.5,518.5 1760,517 1764.5,514 1768,512.5 1769,511.5 1773,509 1774.5,507.5 1777.5,505.5 1781,503 1782,502 1785.5,498 1786.5,497.5 1790.5,493.5 1791,493.5 1794.5,489 1795,488 1798.5,484 1799.5,483 1802,479.5 1804,476 1804.5,474.5 1807,470 1808,467 1809,465 1810.5,460.5 1812,456 1812.5,454 1813.5,451 1815,446.5 1816,441.5 1816,437 1817,437Z" fill="#d0fc8a"/>
<path d="M1816,441.5 1815,446.5 1813.5,451 1812.5,454 1812,456 1810.5,460.5 1809,465 1808,467 1807,470 1804.5,474.5 1804,476 1802,479.5 1799.5,483 1798.5,484 1795,488 1794.5,489 1791,493.5 1790.5,493.5 1786.5,497.5 1785.5,498 1782,502 1781,503 1777.5,505.5 1774.5,507.5 1773,509 1769,511.5 1768,512.5 1764.5,514 1760,517 1755.5,518.5 1751.5,521 1749,521.5 1747,522 1742.5,524 1738,525 1734,526.5 1733.5,526.5 1729.5,527 1725,527.5 1720.5,528.5 1716.5,528 1712,529 1712,526.5 1712,523 1716.5,522.5 1720.5,523 1725,522 1728.5,521.5 1729.5,521.5 1734,521 1738,519.5 1742.5,518.5 1746,517 1747,516.5 1751.5,515.5 1755.5,513 1757.5,512.5 1760,511.5 1764.5,508.5 1766,507.5 1769,506 1773,503 1773.5,503 1777.5,499.5 1779.5,498 1782,496.5 1784.5,493.5 1786.5,492 1789.5,489 1790.5,488 1793.5,484 1795,482.5 1797.5,479.5 1799.5,477 1801,474.5 1804,470 1806,465 1808,461 1808.5,460.5 1810,456 1811.5,451 1812.5,447.5 1813,446.5 1814.5,441.5 1814.5,437 1816,437 1816,441.5Z" fill="#d8fa88"/>
<path d="M1814.5,441.5 1813,446.5 1812.5,447.5 1811.5,451 1810,456 1808.5,460.5 1808,461 1806,465 1804,470 1801,474.5 1799.5,477 1797.5,479.5 1795,482.5 1793.5,484 1790.5,488 1789.5,489 1786.5,492 1784.5,493.5 1782,496.5 1779.5,498 1777.5,499.5 1773.5,503 1773,503 1769,506 1766,507.5 1764.5,508.5 1760,511.5 1757.5,512.5 1755.5,513 1751.5,515.5 1747,516.5 1746,517 1742.5,518.5 1738,519.5 1734,521 1729.5,521.5 1728.5,521.5 1725,522 1720.5,523 1716.5,522.5 1712,523 1712,521.5 1712,518 1716.5,517 1720.5,517.5 1723.5,517 1725,516.5 1729.5,516.5 1734,515.5 1738,514 1742.5,513.5 1744.5,512.5 1747,511 1751.5,510 1755.5,507.5 1760,506 1764.5,503 1765,503 1769,500.5 1772.5,498 1773,497.5 1777.5,494 1778.5,493.5 1782,491 1784,489 1786.5,486.5 1788.5,484 1790.5,482.5 1793,479.5 1795,477 1797,474.5 1799.5,471.5 1800.5,470 1803.5,465 1804,464.5 1805.5,460.5 1808,456 1808,455.5 1809.5,451 1811,446.5 1812.5,442 1812.5,441.5 1813,437 1814.5,437 1814.5,441.5Z" fill="#e0f886"/>
<path d="M1812.5,437 1813,437 1812.5,441.5 1812.5,442 1811,446.5 1809.5,451 1808,455.5 1808,456 1805.5,460.5 1804,464.5 1803.5,465 1800.5,470 1799.5,471.5 1797,474.5 1795,477 1793,479.5 1790.5,482.5 1788.5,484 1786.5,486.5 1784,489 1782,491 1778.5,493.5 1777.5,494 1773,497.5 1772.5,498 1769,500.5 1765,503 1764.5,503 1760,506 1755.5,507.5 1751.5,510 1747,511 1744.5,512.5 1742.5,513.5 1738,514 1734,515.5 1729.5,516.5 1725,516.5 1723.5,517 1720.5,517.5 1716.5,517 1712,518 1712,517 1712,512.5 1714.5,512.5 1716.5,512 1720,512.5 1720.5,512.5 1721,512.5 1725,511.5 1729.5,511 1734,510.5 1738,509 1742.5,508 1744,507.5 1747,506 1751.5,505 1755,503 1755.5,502.5 1760,501 1764,498 1764.5,498 1769,495.5 1771.5,493.5 1773,492.5 1777.5,489 1782,485.5 1783.5,484 1786.5,481 1788,479.5 1790.5,477 1792.5,474.5 1795,471.5 1796.5,470 1799.5,466 1800,465 1803,460.5 1804,459.5 1805.5,456 1807.5,451 1808,450 1809.5,446.5 1811,441.5 1811.5,437 1812.5,437Z" fill="#e7f484"/>
<path d="M1811,441.5 1809.5,446.5 1808,450 1807.5,451 1805.5,456 1804,459.5 1803,460.5 1800,465 1799.5,466 1796.5,470 1795,471.5 1792.5,474.5 1790.5,477 1788,479.5 1786.5,481 1783.5,484 1782,485.5 1777.5,489 1773,492.5 1771.5,493.5 1769,495.5 1764.5,498 1764,498 1760,501 1755.5,502.5 1755,503 1751.5,505 1747,506 1744,507.5 1742.5,508 1738,509 1734,510.5 1729.5,511 1725,511.5 1721,512.5 1720.5,512.5 1720,512.5 1716.5,512 1714.5,512.5 1712,512.5 1712,507.5 1713,507.5 1716.5,507 1720.5,507.5 1725,506.5 1729.5,506 1734,505.5 1738,504 1742.5,503 1743,503 1747,501 1751.5,500 1754.5,498 1755.5,497.5 1760,496 1763.5,493.5 1764.5,493 1769,490.5 1771.5,489 1773,487.5 1777.5,484 1782,480.5 1783,479.5 1786.5,476 1788,474.5 1790.5,472 1792.5,470 1795,466.5 1796,465 1799.5,461.5 1800,460.5 1803,456 1804,454.5 1805.5,451 1807.5,446.5 1808,445.5 1809.5,441.5 1810,437 1811.5,437 1811,441.5Z" fill="#eff183"/>
<path d="M1808,440 1808.5,437 1810,437 1809.5,441.5 1808,445.5 1807.5,446.5 1805.5,451 1804,454.5 1803,456 1800,460.5 1799.5,461.5 1796,465 1795,466.5 1792.5,470 1790.5,472 1788,474.5 1786.5,476 1783,479.5 1782,480.5 1777.5,484 1773,487.5 1771.5,489 1769,490.5 1764.5,493 1763.5,493.5 1760,496 1755.5,497.5 1754.5,498 1751.5,500 1747,501 1743,503 1742.5,503 1738,504 1734,505.5 1729.5,506 1725,506.5 1720.5,507.5 1716.5,507 1713,507.5 1712,507.5 1712,503 1716.5,502 1720.5,502.5 1725,501.5 1729.5,501.5 1734,500.5 1738,499 1742.5,498.5 1743,498 1747,496.5 1751.5,495 1754,493.5 1755.5,492.5 1760,491 1763.5,489 1764.5,488 1769,485.5 1771,484 1773,482.5 1777.5,479.5 1777.5,479 1782,476 1783,474.5 1786.5,471.5 1788,470 1790.5,467.5 1792.5,465 1795,462 1796,460.5 1799.5,456.5 1800,456 1803,451 1804,450 1805.5,446.5 1808,441.5 1808,440Z" fill="#f4eb82"/>
<path d="M1808,437 1808.5,437 1808,440 1808,441.5 1805.5,446.5 1804,450 1803,451 1800,456 1799.5,456.5 1796,460.5 1795,462 1792.5,465 1790.5,467.5 1788,470 1786.5,471.5 1783,474.5 1782,476 1777.5,479 1777.5,479.5 1773,482.5 1771,484 1769,485.5 1764.5,488 1763.5,489 1760,491 1755.5,492.5 1754,493.5 1751.5,495 1747,496.5 1743,498 1742.5,498.5 1738,499 1734,500.5 1729.5,501.5 1725,501.5 1720.5,502.5 1716.5,502 1712,503 1712,498 1712.5,498 1716.5,497.5 1720.5,498 1725,497 1729.5,496.5 1734,496 1738,494.5 1742.5,493.5 1743,493.5 1747,491.5 1751.5,490.5 1754.5,489 1755.5,488 1760,486.5 1763.5,484 1764.5,483.5 1769,481 1771.5,479.5 1773,478 1777.5,474.5 1782,471.5 1783,470 1786.5,467 1788,465 1790.5,463 1792.5,460.5 1795,457.5 1796.5,456 1799.5,452.5 1800,451 1803.5,446.5 1804,446 1806,441.5 1806.5,437 1808,437Z" fill="#fae580"/>
<path d="M1806,441.5 1804,446 1803.5,446.5 1800,451 1799.5,452.5 1796.5,456 1795,457.5 1792.5,460.5 1790.5,463 1788,465 1786.5,467 1783,470 1782,471.5 1777.5,474.5 1773,478 1771.5,479.5 1769,481 1764.5,483.5 1763.5,484 1760,486.5 1755.5,488 1754.5,489 1751.5,490.5 1747,491.5 1743,493.5 1742.5,493.5 1738,494.5 1734,496 1729.5,496.5 1725,497 1720.5,498 1716.5,497.5 1712.5,498 1712,498 1712,493.5 1713,493.5 1716.5,493 1720.5,493.5 1725,492.5 1729.5,492 1734,491.5 1738,490 1742.5,489 1743.5,489 1747,487 1751.5,486 1754.5,484 1755.5,483.5 1760,482 1764,479.5 1764.5,479 1769,476.5 1771.5,474.5 1773,473.5 1777.5,470 1778,470 1782,467 1783.5,465 1786.5,462.5 1788.5,460.5 1790.5,458.5 1793,456 1795,453.5 1797,451 1799.5,448.5 1800.5,446.5 1804,442 1804,441.5 1804.5,437 1806.5,437 1806,441.5Z" fill="#fcde80"/>
<path d="M1804,437 1804.5,437 1804,441.5 1804,442 1800.5,446.5 1799.5,448.5 1797,451 1795,453.5 1793,456 1790.5,458.5 1788.5,460.5 1786.5,462.5 1783.5,465 1782,467 1778,470 1777.5,470 1773,473.5 1771.5,474.5 1769,476.5 1764.5,479 1764,479.5 1760,482 1755.5,483.5 1754.5,484 1751.5,486 1747,487 1743.5,489 1742.5,489 1738,490 1734,491.5 1729.5,492 1725,492.5 1720.5,493.5 1716.5,493 1713,493.5 1712,493.5 1712,489 1714.5,489 1716.5,488.5 1720,489 1720.5,489 1721,489 1725,488 1729.5,487.5 1734,487 1738,485.5 1742.5,484.5 1744,484 1747,482.5 1751.5,481.5 1755,479.5 1755.5,479 1760,477.5 1764.5,474.5 1769,472 1772,470 1773,469.5 1777.5,466 1778.5,465 1782,462.5 1784,460.5 1786.5,458.5 1789,456 1790.5,454.5 1793.5,451 1795,449.5 1797.5,446.5 1799.5,444.5 1801,441.5 1802,437 1804,437Z" fill="#fed880"/>
<path d="M1799.5,437 1802,437 1801,441.5 1799.5,444.5 1797.5,446.5 1795,449.5 1793.5,451 1790.5,454.5 1789,456 1786.5,458.5 1784,460.5 1782,462.5 1778.5,465 1777.5,466 1773,469.5 1772,470 1769,472 1764.5,474.5 1760,477.5 1755.5,479 1755,479.5 1751.5,481.5 1747,482.5 1744,484 1742.5,484.5 1738,485.5 1734,487 1729.5,487.5 1725,488 1721,489 1720.5,489 1720,489 1716.5,488.5 1714.5,489 1712,489 1712,485 1716.5,484 1720.5,484.5 1723,484 1725,483.5 1729.5,483.5 1734,482.5 1738,481 1742.5,480.5 1744.5,479.5 1747,478.5 1751.5,477 1755.5,474.5 1756,474.5 1760,473 1764.5,470.5 1765,470 1769,468 1773,465 1777.5,461.5 1779,460.5 1782,458.5 1784.5,456 1786.5,454 1790,451 1790.5,450.5 1794,446.5 1795,445.5 1798.5,441.5 1799,437 1799.5,437Z" fill="#fed07e"/>
<path d="M1795,441 1796,437 1799,437 1798.5,441.5 1795,445.5 1794,446.5 1790.5,450.5 1790,451 1786.5,454 1784.5,456 1782,458.5 1779,460.5 1777.5,461.5 1773,465 1769,468 1765,470 1764.5,470.5 1760,473 1756,474.5 1755.5,474.5 1751.5,477 1747,478.5 1744.5,479.5 1742.5,480.5 1738,481 1734,482.5 1729.5,483.5 1725,483.5 1723,484 1720.5,484.5 1716.5,484 1712,485 1712,484 1712,480.5 1716.5,480 1720.5,480 1725,479.5 1729.5,479 1734,478 1738,477 1742.5,476 1745.5,474.5 1747,474 1751.5,473 1755.5,470.5 1757,470 1760,469 1764.5,466 1766,465 1769,464 1773,461 1773.5,460.5 1777.5,457.5 1780,456 1782,454.5 1785.5,451 1786.5,450 1790.5,446.5 1791,446.5 1795,441.5 1795,441Z" fill="#fec87c"/>
<path d="M1795,437 1796,437 1795,441 1795,441.5 1791,446.5 1790.5,446.5 1786.5,450 1785.5,451 1782,454.5 1780,456 1777.5,457.5 1773.5,460.5 1773,461 1769,464 1766,465 1764.5,466 1760,469 1757,470 1755.5,470.5 1751.5,473 1747,474 1745.5,474.5 1742.5,476 1738,477 1734,478 1729.5,479 1725,479.5 1720.5,480 1716.5,480 1712,480.5 1712,479.5 1712,476.5 1716.5,475.5 1720.5,476 1725,475 1729.5,475 1730.5,474.5 1734,474 1738,472.5 1742.5,472 1747,470 1751.5,469 1755.5,466.5 1759,465 1760,465 1764.5,462 1767.5,460.5 1769,459.5 1773,457 1774.5,456 1777.5,453.5 1781,451 1782,450.5 1786,446.5 1786.5,446.5 1790.5,442.5 1791.5,441.5 1792.5,437 1795,437Z" fill="#fdc07a"/>
<path d="M1790.5,437 1792.5,437 1791.5,441.5 1790.5,442.5 1786.5,446.5 1786,446.5 1782,450.5 1781,451 1777.5,453.5 1774.5,456 1773,457 1769,459.5 1767.5,460.5 1764.5,462 1760,465 1759,465 1755.5,466.5 1751.5,469 1747,470 1742.5,472 1738,472.5 1734,474 1730.5,474.5 1729.5,475 1725,475 1720.5,476 1716.5,475.5 1712,476.5 1712,474.5 1712,472 1716.5,471.5 1720.5,472 1725,471 1729.5,470.5 1733.5,470 1734,470 1738,468.5 1742.5,468 1747,466 1749.5,465 1751.5,465 1755.5,462.5 1760,461 1760.5,460.5 1764.5,458 1768.5,456 1769,455.5 1773,453 1775.5,451 1777.5,449.5 1782,446.5 1786.5,442.5 1787,441.5 1788.5,437 1790.5,437Z" fill="#fcb877"/>
<path d="M1786.5,437 1788.5,437 1787,441.5 1786.5,442.5 1782,446.5 1777.5,449.5 1775.5,451 1773,453 1769,455.5 1768.5,456 1764.5,458 1760.5,460.5 1760,461 1755.5,462.5 1751.5,465 1749.5,465 1747,466 1742.5,468 1738,468.5 1734,470 1733.5,470 1729.5,470.5 1725,471 1720.5,472 1716.5,471.5 1712,472 1712,470 1712,468 1716.5,467.5 1720.5,468 1725,467 1729.5,466.5 1734,466 1736,465 1738,464.5 1742.5,464 1747,461.5 1751.5,461 1752,460.5 1755.5,458.5 1760,457 1761.5,456 1764.5,454 1769,452 1770,451 1773,449 1776.5,446.5 1777.5,446 1782,443 1783,441.5 1784,437 1786.5,437Z" fill="#fab074"/>
<path d="M1782,437 1784,437 1783,441.5 1782,443 1777.5,446 1776.5,446.5 1773,449 1770,451 1769,452 1764.5,454 1761.5,456 1760,457 1755.5,458.5 1752,460.5 1751.5,461 1747,461.5 1742.5,464 1738,464.5 1736,465 1734,466 1729.5,466.5 1725,467 1720.5,468 1716.5,467.5 1712,468 1712,465 1712,464 1716.5,463.5 1720.5,464 1725,463 1729.5,462.5 1734,462 1738,460.5 1738.5,460.5 1742.5,460 1747,458 1751.5,457 1753,456 1755.5,454.5 1760,453 1763,451 1764.5,450 1769,448 1771,446.5 1773,445 1777.5,442 1778,441.5 1779,437 1782,437Z" fill="#f7a972"/>
<path d="M1773,439.5 1774,437 1777.5,437 1779,437 1778,441.5 1777.5,442 1773,445 1771,446.5 1769,448 1764.5,450 1763,451 1760,453 1755.5,454.5 1753,456 1751.5,457 1747,458 1742.5,460 1738.5,460.5 1738,460.5 1734,462 1729.5,462.5 1725,463 1720.5,464 1716.5,463.5 1712,464 1712,460.5 1712,460 1716.5,459.5 1720.5,460 1725,459 1729.5,458.5 1734,458 1738,456.5 1742.5,456 1747,454 1751.5,453 1754.5,451 1755.5,450.5 1760,449 1764.5,446.5 1769,444 1772.5,441.5 1773,439.5Z" fill="#f3a270"/>
<path d="M1769,437 1773,437 1774,437 1773,439.5 1772.5,441.5 1769,444 1764.5,446.5 1760,449 1755.5,450.5 1754.5,451 1751.5,453 1747,454 1742.5,456 1738,456.5 1734,458 1729.5,458.5 1725,459 1720.5,460 1716.5,459.5 1712,460 1712,456 1714,456 1716.5,455.5 1720.5,456 1721,456 1725,455 1729.5,454.5 1734,454 1738,452.5 1742.5,452 1744.5,451 1747,450 1751.5,449 1755.5,446.5 1756,446.5 1760,445 1764.5,442.5 1766,441.5 1767.5,437 1769,437Z" fill="#ee9c6e"/>
<path d="M1760,438.5 1760.5,437 1764.5,437 1767.5,437 1766,441.5 1764.5,442.5 1760,445 1756,446.5 1755.5,446.5 1751.5,449 1747,450 1744.5,451 1742.5,452 1738,452.5 1734,454 1729.5,454.5 1725,455 1721,456 1720.5,456 1716.5,455.5 1714,456 1712,456 1712,452.5 1716.5,451.5 1720.5,452 1725,451 1729.5,451 1734,450 1738,449 1742.5,448 1746,446.5 1747,446 1751.5,445 1755.5,442.5 1758.5,441.5 1760,438.5Z" fill="#e8966c"/>
<path d="M1751.5,438.5 1752,437 1755.5,437 1760,437 1760.5,437 1760,438.5 1758.5,441.5 1755.5,442.5 1751.5,445 1747,446 1746,446.5 1742.5,448 1738,449 1734,450 1729.5,451 1725,451 1720.5,452 1716.5,451.5 1712,452.5 1712,451 1712,448.5 1716.5,447.5 1720.5,448 1725,447 1729.5,447 1732.5,446.5 1734,446 1738,445 1742.5,444 1747,442 1749,441.5 1751.5,438.5Z" fill="#e1916b"/>
<path d="M1738,439 1740,437 1742.5,437 1747,437 1751.5,437 1752,437 1751.5,438.5 1749,441.5 1747,442 1742.5,444 1738,445 1734,446 1732.5,446.5 1729.5,447 1725,447 1720.5,448 1716.5,447.5 1712,448.5 1712,446.5 1712,444.5 1716.5,443.5 1720.5,444 1725,443.5 1729.5,443 1734,442.5 1736,441.5 1738,439Z" fill="#da8d6a"/>
<path d="M1716.5,437 1720.5,437 1725,437 1729.5,437 1734,437 1738,437 1740,437 1738,439 1736,441.5 1734,442.5 1729.5,443 1725,443.5 1720.5,444 1716.5,443.5 1712,444.5 1712,441.5 1712,437 1716.5,437Z" fill="#d2896a"/>
</g>
<path d="M1521,433.8 H1904" stroke="#9a9a9a" stroke-width="1" stroke-dasharray="5 3"/>
<path d="M1521,435.4 H1904" stroke="#5e5674" stroke-width="1.8"/>
<path d="M1521,436.6 H1712" stroke="#b9c2a8" stroke-width="1"/>
<g fill="none" stroke="#15157a" stroke-width="1.3"><path d="M1608.4,433.5 V398.6 Q1712,393.6 1816.4,398.6 V433.5"/><path d="M1608.4,398.6 Q1712,404.6 1816.4,398.6"/><path d="M1706.3,397 V433.5 M1716,401.5 V433.5"/></g>
<path d="M1866,418 H1904" stroke="#1414e6" stroke-width="1.2"/><polygon points="1855.5,418 1866.5,413.8 1866.5,422.2" fill="#1414e6"/>
<text x="1841.5" y="419" font-family="Liberation Sans,sans-serif" font-size="11.5" fill="#1414e6">Y</text>
<path d="M1865.1,217 V305" stroke="#4fa653" stroke-width="1.7"/><path d="M1821.2,261.1 H1904" stroke="#5353f2" stroke-width="1.7"/>
<rect x="1842.4" y="236.4" width="45.2" height="49.3" rx="1.5" fill="#ffcdcd" stroke="#8e8e8e" stroke-width="1.2"/>
<rect x="1843" y="281.6" width="44" height="3.6" fill="#9db49d"/><rect x="1843" y="237" width="44" height="3.6" fill="#eec6bd"/>
<path d="M1865.1,241 V281" stroke="#e9c9b5" stroke-width="1.5"/><path d="M1843,261.1 H1887" stroke="#e6c0dc" stroke-width="1.5"/>
<text x="1851" y="258.8" font-family="Liberation Mono,monospace" font-size="11.4" fill="#7c6464" letter-spacing="0.2">Left</text>
<text x="1811.5" y="262" font-family="Liberation Sans,sans-serif" font-size="11" fill="#5353f2">Y</text>
<text x="1863.6" y="313.8" font-family="Liberation Sans,sans-serif" font-size="11" fill="#4fa653">Z</text>
</svg>
<div class="abs" style="left:1120px;top:1054px;width:20px;height:18px;background:#ececec;border-right:2px solid #a3a3a3;border-bottom:2px solid #a3a3a3"></div><svg class="abs" style="left:1120px;top:1054px" width="18" height="16" viewBox="0 0 18 16"><rect x="5" y="4" width="1.3" height="9" fill="#9a9a9a"/><polygon points="13,4 13,13 7,8.5" fill="#9a9a9a"/></svg>
<div class="abs" style="left:1141px;top:1054px;width:20px;height:18px;background:#ececec;border-right:2px solid #a3a3a3;border-bottom:2px solid #a3a3a3"></div><svg class="abs" style="left:1141px;top:1054px" width="18" height="16" viewBox="0 0 18 16"><polygon points="12,4 12,13 6,8.5" fill="#9a9a9a"/></svg>
<div class="abs" style="left:1162px;top:1054px;width:20px;height:18px;background:#ececec;border-right:2px solid #a3a3a3;border-bottom:2px solid #a3a3a3"></div><svg class="abs" style="left:1162px;top:1054px" width="18" height="16" viewBox="0 0 18 16"><path d="M7,4.5 L6,13 M11.5,4.5 L10.5,13 M4.5,7 H13.5 M4,10.5 H13" stroke="#9a9a9a" stroke-width="1.2" fill="none"/></svg>
<div class="abs" style="left:1183px;top:1054px;width:20px;height:18px;background:#ececec;border-right:2px solid #a3a3a3;border-bottom:2px solid #a3a3a3"></div><svg class="abs" style="left:1183px;top:1054px" width="18" height="16" viewBox="0 0 18 16"><polygon points="6.5,4 6.5,13 12.5,8.5" fill="#9a9a9a"/></svg>
<div class="abs" style="left:1204px;top:1054px;width:20px;height:18px;background:#ececec;border-right:2px solid #a3a3a3;border-bottom:2px solid #a3a3a3"></div><svg class="abs" style="left:1204px;top:1054px" width="18" height="16" viewBox="0 0 18 16"><polygon points="5,4 5,13 11,8.5" fill="#9a9a9a"/><rect x="12" y="4" width="1.3" height="9" fill="#9a9a9a"/></svg>
<svg class="abs" style="left:1224px;top:1052px" width="76" height="20" viewBox="1224 1052 76 20"><polygon points="1225.5,1053.5 1234.2,1070.4 1287.2,1070.4 1295.5,1053.5" fill="#fff" stroke="#000" stroke-width="1"/><path d="M1226.5,1053.5 H1294.5" stroke="#fff" stroke-width="1.4"/><text x="1236.4" y="1066" font-family="DejaVu Sans,Liberation Sans,sans-serif" font-weight="bold" font-size="10.6" fill="#000" letter-spacing="0.217">Stage 1</text></svg>
<div class="abs" style="left:0;top:1105px;width:1920px;height:5px;background:#f4f5f7"></div>
<div class="abs" style="left:0;top:1109px;width:1918px;height:8px;background:#fff;border-top:1px solid #dfdfdf;border-bottom:1px solid #d4d4d4;border-right:1px solid #d4d4d4"></div>
<div class="abs" style="left:0;top:1117px;width:1920px;height:21px;background:#f0f0f0"></div>
<div class="abs" style="left:0;top:1138px;width:1920px;height:1px;background:#aaa"></div>
<div class="abs" style="left:0;top:1139px;width:1920px;height:21px;background:#fff"></div>
<div class="abs" style="left:1759px;top:1084px;width:134px;height:20px;background:#fff;border:1px solid #000"></div>
<div class="abs" style="left:0;top:1110px;width:170px;height:28px;background:#fff;border-right:1px solid #d9d9d9"></div>
<svg class="abs" style="left:6px;top:1118px" width="15" height="17" viewBox="0 0 19 20" preserveAspectRatio="none">
<polygon points="9.5,0.6 17.8,5 17.8,14.6 9.5,19.2 1.2,14.6 1.2,5" fill="#3e3e3e"/>
<polygon points="1.2,6.5 9.5,12.5 9.5,19.2 1.2,14.6" fill="#e2560d"/>
<polygon points="17.8,6.5 9.5,12.5 9.5,19.2 17.8,14.6" fill="#b23c05"/>
<polygon points="2.6,6 9.5,11 16.4,6 16.4,9.2 9.5,14.6 2.6,9.2" fill="#fff"/>
<polygon points="9.5,0.6 17.8,5 9.5,9.6 1.2,5" fill="#555"/></svg>
<div class="t" style="left:27px;top:1119px;font-size:11.4px;color:#111;letter-spacing:-0.324px">Project 1* - Plan/3D View</div>
<div class="abs" style="left:171px;top:1116px;width:150px;height:20px;background:#f0f0f0;border:1px solid #e3e3e3;border-top:none"></div>
<svg class="abs" style="left:172px;top:1118px" width="17" height="17" viewBox="0 0 17 18">
<rect x="2.4" y="7" width="4" height="8" fill="#9a9a3e"/><rect x="6.4" y="4" width="4" height="11" fill="#e9b941"/><rect x="10.4" y="8" width="4" height="7" fill="#e25a1e"/>
<path d="M0.8,1 V16.2 H16.5" fill="none" stroke="#3a3a4a" stroke-width="1.2"/></svg>
<div class="t" style="left:194px;top:1118px;font-size:11.4px;color:#111;letter-spacing:-0.436px">Project 1* - Chart View</div>
<div class="t sy" style="left:3.5px;top:1144px;font-size:11.6px;color:#333;letter-spacing:-0.633px">Ready</div>
<div class="abs" style="left:1531.3px;top:1142px;width:97.29999999999995px;height:18px;background:#cce4f7"></div><div class="t sy" style="left:1539.6px;top:1144px;font-size:11.6px;color:#1a1a1a;letter-spacing:-0.427px">MAX DATATIPS</div>
<div class="abs" style="left:1631px;top:1142px;width:36px;height:18px;background:#cce4f7"></div><div class="t sy" style="left:1634px;top:1144px;font-size:11.6px;color:#1a1a1a;letter-spacing:-0.696px">SNAP</div>
<div class="t sy" style="left:1670.6px;top:1144px;font-size:11.6px;color:#a3a3a3;letter-spacing:-1.4px">GRID</div>
<div class="abs" style="left:1699px;top:1142px;width:45.799999999999955px;height:18px;background:#cce4f7"></div><div class="t sy" style="left:1702.6px;top:1144px;font-size:11.6px;color:#1a1a1a;letter-spacing:-0.919px">ORTHO</div>
<div class="t sy" style="left:1748.5px;top:1144px;font-size:11.6px;color:#a3a3a3;letter-spacing:-0.778px">OSNAP</div>
</body>
</html>
